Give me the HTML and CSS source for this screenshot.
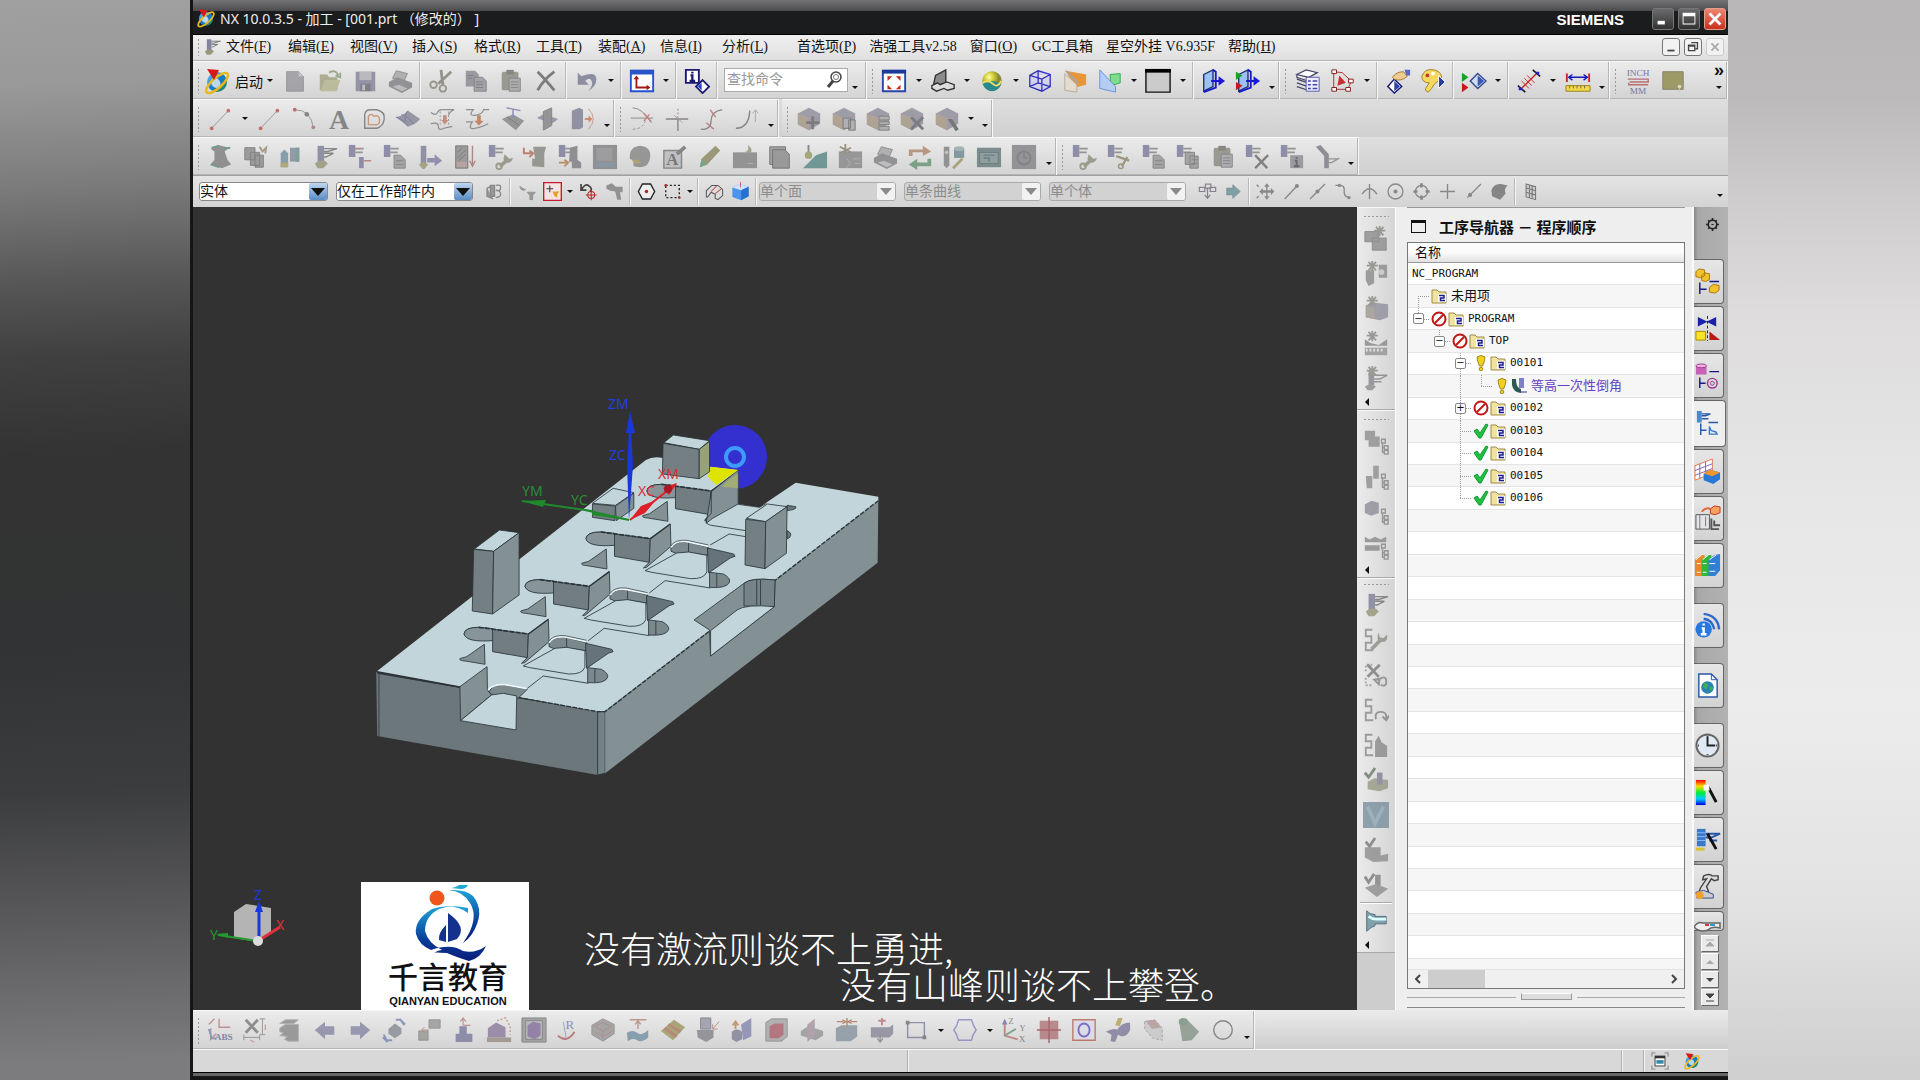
FILE: index.html
```html
<!DOCTYPE html>
<html lang="zh-CN">
<head>
  <meta charset="UTF-8">
  <meta name="viewport" content="width=device-width, initial-scale=1.0">
  <title>NX 10.0.3.5 - 加工</title>
  <link rel="stylesheet" href="styles.css">
</head>
<body>
  <!-- Shared gradients -->
  <svg class="defs" aria-hidden="true">
    <defs>
      <linearGradient id="globe" x1="0" y1="0" x2="1" y2="1"><stop offset="0" stop-color="#6cf"/><stop offset=".5" stop-color="#1878d0"/><stop offset="1" stop-color="#1a8f3a"/></linearGradient>
      <linearGradient id="rainbow" x1="0" y1="0" x2="0" y2="1"><stop offset="0" stop-color="#f00"/><stop offset=".25" stop-color="#fd0"/><stop offset=".5" stop-color="#0e3"/><stop offset=".75" stop-color="#0cf"/><stop offset="1" stop-color="#00d"/></linearGradient>
      <linearGradient id="qblue" x1="0" y1="0" x2="0" y2="1"><stop offset="0" stop-color="#1ea5d8"/><stop offset=".6" stop-color="#0a3f9a"/><stop offset="1" stop-color="#0a1a78"/></linearGradient>
      <radialGradient id="ballg" cx=".35" cy=".3"><stop offset="0" stop-color="#ffa"/><stop offset=".5" stop-color="#cc3"/><stop offset="1" stop-color="#883"/></radialGradient>
    </defs>
  </svg>

  <!-- Icon sprite -->
  <svg class="sprite" aria-hidden="true">
    <symbol id="nx" viewBox="0 0 28 28"><circle cx="14" cy="15" r="10" fill="url(#globe)"/><path d="M8 13q4-5 8 0t-2 8q-6 0-6-8z" fill="#fff" opacity=".7"/><ellipse cx="14" cy="16" rx="14" ry="5" transform="rotate(-42 14 16)" fill="none" stroke="#e8b820" stroke-width="2.5"/><path d="M4 2l12 1-5 10z" fill="#d81818"/></symbol>
    <symbol id="new" viewBox="0 0 28 28"><path d="M5 4h13l5 5v16H5z" fill="#9b9ba0" stroke="#88888e"/><path d="M18 4v5h5z" fill="#c4c4c8"/></symbol>
    <symbol id="open" viewBox="0 0 28 28"><path d="M3 7h8l2 3h9v14H3z" fill="#a3a384"/><path d="M4 25l4-12h17l-4 12z" fill="#b5b592"/><path d="M13 5q7-4 10 3M20 8l5 2 0-5" fill="none" stroke="#8ba07c" stroke-width="2"/></symbol>
    <symbol id="save" viewBox="0 0 28 28"><path d="M4 4h21v21H4z" fill="#87879c"/><path d="M8 4h13v9H8z" fill="#b3b3b8"/><path d="M9 17h11v8H9z" fill="#6f6f7c"/><path d="M11 18h3v6h-3z" fill="#bbb"/></symbol>
    <symbol id="print" viewBox="0 0 28 28"><path d="M10 3l12 3-4 9-12-4z" fill="#a8a8aa" stroke="#808080"/><path d="M2 15l9-5 16 6v5l-11 6-14-7z" fill="#85858a"/><path d="M6 20l10 5 6-3-9-4z" fill="#b7b7b9"/></symbol>
    <symbol id="cut" viewBox="0 0 28 28"><path d="M25 4L11 17M14 2l2 16" stroke="#85857c" stroke-width="3"/><circle cx="6" cy="18" r="3.500" fill="none" stroke="#8b8b7c" stroke-width="2"/><circle cx="16" cy="22" r="3.500" fill="none" stroke="#8b8b7c" stroke-width="2"/></symbol>
    <symbol id="copy" viewBox="0 0 28 28"><path d="M3 3h10l4 4v13H3z" fill="#8d8d93"/><path d="M12 10h9l4 4v11H12z" fill="#9a9aa2" stroke="#74747c"/><path d="M14 15h8M14 18h8M14 21h8M5 8h6M5 11h5" stroke="#6c6c74"/></symbol>
    <symbol id="paste" viewBox="0 0 28 28"><rect x="4" y="4" width="18" height="20" rx="2" fill="#8e8d84"/><path d="M9 2h8v5H9z" fill="#77776f"/><path d="M12 11h12v14H12z" fill="#a5a5a8" stroke="#77777c"/><path d="M14 15h8M14 18h8M14 21h8" stroke="#77777c"/></symbol>
    <symbol id="del" viewBox="0 0 28 28"><path d="M5 4q8 8 18 20M23 4Q12 12 5 24" fill="none" stroke="#6b6b6e" stroke-width="3"/></symbol>
    <symbol id="undo" viewBox="0 0 28 28"><path d="M4 5v13h12l-4-4q5-5 7 0t-4 11q10-6 9-14T8 9z" fill="#7f7f97"/></symbol>
    <symbol id="wcs" viewBox="0 0 28 28"><path d="M2 3h24v22H2z" fill="#fff" stroke="#2452d0" stroke-width="2"/><path d="M1 2h26v5H1z" fill="#2a55c8"/><path d="M8 10v11h13" fill="none" stroke="#a01818" stroke-width="2"/><path d="M5 12l3-4 3 4zM19 18l4 3-4 3z" fill="#a01818"/></symbol>
    <symbol id="info" viewBox="0 0 28 28"><path d="M2 2h14v14H2z" fill="#fff" stroke="#191970" stroke-width="2"/><path d="M9 4v2M7 8h2v5M6 14h6" stroke="#191970" stroke-width="2.500" fill="none"/><path d="M20 13l7 7-7 7-7-7z" fill="#fff" stroke="#191970" stroke-width="2"/><path d="M19 16v8l-4-4z" fill="#2238c8"/></symbol>
    <symbol id="fit" viewBox="0 0 28 28"><path d="M2 3h24v22H2z" fill="#fff" stroke="#2844a8" stroke-width="2"/><path d="M1 2h26v4H1z" fill="#1c3898"/><path d="M7 9h5l-5 5zM21 9h-5l5 5zM7 23h5l-5-5zM21 23h-5l5-5z" fill="#c82818"/></symbol>
    <symbol id="clip" viewBox="0 0 28 28"><path d="M4 17L6 8l11-6v14l-6 2z" fill="#8b8b8b" stroke="#333" stroke-width="1.500"/><path d="M2 19l6-3 3 2 7-3 8 3v4l-7 2-4-2-8 3-5-3z" fill="#ddd" stroke="#333" stroke-width="1.500"/></symbol>
    <symbol id="ball" viewBox="0 0 28 28"><circle cx="14" cy="14" r="10.500" fill="url(#ballg)"/><path d="M4 17q10-6 20 0-3 8-10 8T4 17z" fill="#2a8a8a"/><path d="M4 16q6-4 11 1t9-3" fill="none" stroke="#ed6" stroke-width="2"/></symbol>
    <symbol id="cube" viewBox="0 0 28 28"><path d="M3 8l9-5 13 4v13l-9 5-13-5zM3 8l13 4 9-5M16 12v13M12 3v13l-9 4M12 16l13 4" fill="#c8c8f4" fill-opacity=".5" stroke="#3030c0" stroke-width="1.400"/></symbol>
    <symbol id="persp" viewBox="0 0 28 28"><path d="M4 3l22 4v11l-12 3z" fill="#e8963a"/><path d="M3 6l13 12v8L3 24z" fill="#e4dccf" stroke="#b9aa95"/><path d="M3 3l14 15v-4L6 3z" fill="#b0a498"/></symbol>
    <symbol id="persp2" viewBox="0 0 28 28"><path d="M14 7l11-1v10l-10 3z" fill="#7fdc8c" stroke="#2fae4c"/><path d="M3 2l17 18v6L3 22z" fill="#b3cdf5" stroke="#6a90d8"/></symbol>
    <symbol id="bg" viewBox="0 0 28 28"><path d="M1 2h26v24H1z" fill="#cbcbcb" stroke="#111" stroke-width="1.500"/><path d="M0 1h28v4H0z"/></symbol>
    <symbol id="book" viewBox="0 0 28 28"><path d="M4 7l10-5v18L4 25z" fill="#9cc1f4" stroke="#223070" stroke-width="1.500"/><path d="M14 2l3 2v17l-13 5M12 14h10" fill="none" stroke="#1818c8" stroke-width="2"/><path d="M20 9l7 5-7 5z" fill="#1818e0"/></symbol>
    <symbol id="book2" viewBox="0 0 28 28"><use href="#book"/><path d="M1 4l7 4-7 5z" fill="#18a028"/><path d="M1 15l7 4-7 5z" fill="#c81818"/></symbol>
    <symbol id="layers" viewBox="0 0 28 28"><path d="M2 7l10-5 12 3-9 5zM2 7v3l12 4M2 12l12 4M2 16l12 4M2 20l12 4" fill="#fff" stroke="#446" stroke-width="1.300"/><path d="M12 10h14v15H12z" fill="#eef" stroke="#55a"/><path d="M14 14h3M19 14h5M14 18h3M19 18h5M14 22h3M19 22h5" stroke="#44a" stroke-width="1.500"/></symbol>
    <symbol id="nodes" viewBox="0 0 28 28"><path d="M4 4v19h15l4-9L13 5z" fill="none" stroke="#b02828"/><path d="M2 2h5v4H2zM2 21h5v4H2zM17 21h5v4h-5zM20 12h5v4h-5z" fill="#fff" stroke="#801818"/><path d="M10 8l7 8-9 3z" fill="#c83030"/></symbol>
    <symbol id="hand" viewBox="0 0 28 28"><path d="M10 12l-7 8 7 7 8-7z" fill="#fff" stroke="#181870" stroke-width="1.500"/><path d="M10 14v11l6-5z" fill="#2a40a8"/><path d="M8 10q4-6 12-6l4 5q-7 6-14 3z" fill="#f0cb90" stroke="#a07830"/><path d="M21 2h6v6h-4z" fill="#5a68c0"/></symbol>
    <symbol id="palette" viewBox="0 0 28 28"><path d="M2 9Q5 0 15 2t8 12q-6 0-8 4t-6 8q-4-1-3-4l4-6q-8 0-8-7z" fill="#f4d860" stroke="#a08020"/><circle cx="8" cy="8" r="2" fill="#c33"/><circle cx="14" cy="6" r="2" fill="#fff"/><path d="M20 8l7 7-7 7z" fill="#2a3c9a" stroke="#fff"/></symbol>
    <symbol id="play" viewBox="0 0 28 28"><path d="M1 5l7 5-7 5z" fill="#18a028"/><path d="M1 16l7 5-7 5z" fill="#c81818"/><path d="M18 6l9 8-9 8-8-8z" fill="#cde" stroke="#334a90" stroke-width="1.500"/><path d="M18 8v12l7-6z" fill="#3a58b8"/></symbol>
    <symbol id="dist" viewBox="0 0 28 28"><path d="M5 23L23 5" stroke="#c22" stroke-width="1.500"/><path d="M6 14l8 8M9 11l8 8M12 8l8 8" stroke="#c22"/><path d="M18 2l8 7M2 19l8 7" stroke="#111" stroke-width="1.500"/><path d="M20 4h5v5zM3 24v-5l5 5z" fill="#22c"/></symbol>
    <symbol id="ruler" viewBox="0 0 28 28"><path d="M2 6v9M26 6v9" stroke="#c22" stroke-width="2"/><path d="M4 10h20M8 7l-4 3 4 3M20 7l4 3-4 3" stroke="#1818b8" stroke-width="1.500" fill="none"/><path d="M1 19h26v6H1z" fill="#f2d94c" stroke="#987c14"/><path d="M5 19v3M9 19v3M13 19v3M17 19v3M21 19v3" stroke="#765"/></symbol>
    <symbol id="inch" viewBox="0 0 28 28"><text x="14" y="9" text-anchor="middle" font-size="10" fill="#7676a4">INCH</text><path d="M3 12h22v3H5M25 18H4v-2" fill="none" stroke="#b97070" stroke-width="1.500"/><text x="14" y="28" text-anchor="middle" font-size="10" fill="#7676a4">MM</text></symbol>
    <symbol id="olive" viewBox="0 0 28 28"><path d="M3 4h22v19H3z" fill="#9d9a68" stroke="#85836a"/><circle cx="21" cy="20" r="2" fill="#d8d8c0"/><path d="M21 22v5" stroke="#ccc"/></symbol>

    <!-- curves -->
    <symbol id="line" viewBox="0 0 28 28"><path d="M5 24L23 5" stroke="#888"/><circle cx="5" cy="24" r="2" fill="#c05a4a"/><circle cx="23" cy="5" r="2" fill="#c05a5a"/></symbol>
    <symbol id="arc" viewBox="0 0 28 28"><path d="M4 4q18 0 20 20" fill="none" stroke="#888"/><circle cx="4" cy="4" r="2" fill="#b55"/><circle cx="17" cy="9" r="2.500" fill="#777"/><circle cx="24" cy="23" r="2" fill="#a77"/></symbol>
    <symbol id="texta" viewBox="0 0 28 28"><text x="14" y="25" text-anchor="middle" font-family="Liberation Serif" font-weight="bold" font-size="30" fill="#77777b">A</text></symbol>
    <symbol id="offset" viewBox="0 0 28 28"><path d="M4 24V9q1-5 6-5h7q9 2 8 10t-8 10z" fill="none" stroke="#777" stroke-width="1.500"/><path d="M8 20v-9q3-4 6 0 6-2 6 4t-5 5z" fill="none" stroke="#c58a6a" stroke-width="1.500"/></symbol>
    <symbol id="sheet" viewBox="0 0 28 28"><path d="M1 12q8-2 13-7l13 9q-6 7-13 8z" fill="#8b8b97"/><path d="M1 12q7 1 13 10M7 9q8 3 13 10M14 5q-5 5-2 12" fill="none" stroke="#6a6a9e"/></symbol>
    <symbol id="curve1" viewBox="0 0 28 28"><path d="M1 7q5 4 7 0t6-3h12q-5 2-6 6M1 19q8-2 8 3t6 2l9-2" fill="none" stroke="#808080" stroke-width="1.300"/><path d="M11 6v14M20 6v14" stroke="#888" stroke-dasharray="2 2"/><path d="M14 10h4v5h2l-4 5-4-5h2z" fill="#c08070"/></symbol>
    <symbol id="curve2" viewBox="0 0 28 28"><path d="M1 4h8q-6 7 2 6t9-6h6M1 17h7q-6 9 3 7t14-5" fill="none" stroke="#808080" stroke-width="1.300"/><path d="M13 10h4v6h3l-5 5-5-5h3z" fill="#c07850"/></symbol>
    <symbol id="project" viewBox="0 0 28 28"><path d="M2 14l12-5 12 7-9 10z" fill="#8a8a8e"/><path d="M7 2l15 3M14 4v9" stroke="#7c7cae" stroke-width="1.500"/><path d="M8 12l13 9" stroke="#666"/></symbol>
    <symbol id="intersect" viewBox="0 0 28 28"><path d="M2 13l7-4 16 5-7 5z" fill="#8d8da5"/><path d="M9 6l9-4v19l-9 5z" fill="#88888c" stroke="#777"/></symbol>
    <symbol id="roll" viewBox="0 0 28 28"><path d="M2 5l8-3 4 2v19l-4 2H2z" fill="#84849a"/><path d="M16 14h6" stroke="#b77" stroke-width="2"/><path d="M20 10l4 4-4 4z" fill="#c8824a"/><path d="M20 3q10 11 0 22" fill="none" stroke="#c58a7a"/></symbol>
    <symbol id="trim" viewBox="0 0 28 28"><path d="M2 13h24M4 2q10 0 20 16" fill="none" stroke="#777"/><path d="M16 8l8 9M22 9l-6 7" stroke="#c07070" stroke-width="1.500"/><path d="M4 25q12 0 14-11" fill="none" stroke="#888" stroke-dasharray="3 2"/></symbol>
    <symbol id="cross" viewBox="0 0 28 28"><path d="M2 14h24M15 14v13" stroke="#777" stroke-width="1.500"/><path d="M15 3v11" stroke="#777" stroke-dasharray="2 2"/><path d="M11 10l9 8" stroke="#b88"/></symbol>
    <symbol id="scurve" viewBox="0 0 28 28"><path d="M2 25q11 1 11-9t12-12" fill="none" stroke="#777" stroke-width="1.400"/><path d="M12 4l6 8M8 18l8 7" stroke="#c07070" stroke-width="1.500"/></symbol>
    <symbol id="hook" viewBox="0 0 28 28"><path d="M2 24q14 0 15-19" fill="none" stroke="#777" stroke-width="1.500"/><path d="M23 5v12M20 8l3-4 3 4" stroke="#999" fill="none"/></symbol>
    <symbol id="box" viewBox="0 0 28 28"><path d="M2 8l12-6 12 6v11l-12 7-12-6z" fill="#92919c"/><path d="M2 8l12 5v13l-12-6z" fill="#a79a86"/><path d="M2 8l12 5 12-5M14 13v13" stroke="#a993a8" fill="none"/></symbol>
    <symbol id="b-move" viewBox="0 0 28 28"><use href="#box"/><path d="M18 11v14M11 18h14" stroke="#6c6c70" stroke-width="3"/></symbol>
    <symbol id="b-copy" viewBox="0 0 28 28"><use href="#box"/><path d="M13 13h8v11h-8zM19 15h7v11h-7z" fill="#a9a9ac" stroke="#666"/></symbol>
    <symbol id="b-list" viewBox="0 0 28 28"><use href="#box"/><path d="M15 11h11v4H15zM15 17h11v3H15zM15 22h11v4H15z" fill="#aaa" stroke="#707070"/></symbol>
    <symbol id="b-x" viewBox="0 0 28 28"><use href="#box"/><path d="M13 12l13 13M26 12L13 25" stroke="#6c6c70" stroke-width="3"/></symbol>
    <symbol id="b-wand" viewBox="0 0 28 28"><use href="#box"/><path d="M16 12l9 14" stroke="#666" stroke-width="4"/><path d="M12 13h9" stroke="#999" stroke-width="2"/></symbol>

    <!-- machining -->
    <symbol id="tool" viewBox="0 0 28 28"><path d="M6 2h7v18H6z" fill="#83839c"/><path d="M13 5h14l-10 3h-4M13 10h10l-8 4h-2" fill="none" stroke="#777" stroke-width="1.500"/><path d="M3 21l4-3h7l3 3-5 5H6z" fill="#9a987c"/></symbol>
    <symbol id="mini" viewBox="0 0 28 28"><path d="M2 1h7v13H2z" fill="#8080a0"/><path d="M9 5h9M9 9h8" stroke="#888" stroke-width="2"/></symbol>
    <symbol id="frame" viewBox="0 0 28 28"><path d="M4 5l8-4 12 3-5 4 3 9 4 5-10 4-12-4 4-5V8z" fill="#838385"/><path d="M5 4l8-2M19 5l6-1M4 22l9 3" stroke="#5f927a" stroke-width="2"/></symbol>
    <symbol id="docs" viewBox="0 0 28 28"><path d="M3 4h11v13H3zM9 9h10v14H9zM14 12h9v13h-9z" fill="#8f8f8f" stroke="#707070"/><path d="M19 3l3 5 4-4-1 6" stroke="#988f74" stroke-width="2" fill="none"/></symbol>
    <symbol id="bottle" viewBox="0 0 28 28"><path d="M4 10l4-4 4 4v15H4z" fill="#7993a4"/><path d="M4 20h8v5H4z" fill="#a7a06a"/><path d="M14 4h10v15H14z" fill="#868fa0"/><path d="M20 4h4v15h-4z" fill="#6d9490"/></symbol>
    <symbol id="tools2" viewBox="0 0 28 28"><use href="#mini"/><path d="M13 14h5v12h-5z" fill="#8080a0"/><path d="M8 5h7M18 18h8" stroke="#b77" stroke-width="1.500"/></symbol>
    <symbol id="tool-doc" viewBox="0 0 28 28"><use href="#mini"/><path d="M13 12h7l5 5v9H13z" fill="#9a9a9c" stroke="#777"/><path d="M15 18h8M15 22h8" stroke="#777"/></symbol>
    <symbol id="tool-docs" viewBox="0 0 28 28"><use href="#mini"/><path d="M11 9h10v13H11zM16 13h9v13h-9z" fill="#9a9a9c" stroke="#747474"/><path d="M18 17h6M18 21h6" stroke="#777"/></symbol>
    <symbol id="tool-arrow" viewBox="0 0 28 28"><path d="M4 2h6v22H4z" fill="#83839c"/><path d="M2 22l5-3 5 3-4 5H6z" fill="#9d9a72"/><path d="M11 15h8v-4l8 7-8 6v-4h-8z" fill="#8484a8"/></symbol>
    <symbol id="wall" viewBox="0 0 28 28"><path d="M4 2h13v24H4z" fill="#8f8f8f" stroke="#666"/><path d="M6 15l9-9M6 9l5-5M7 18l8-7" stroke="#666"/><path d="M5 19h11v6H5z" fill="#b39a98"/><path d="M22 2v20M19 18l3 6 3-6" stroke="#a77" fill="none" stroke-width="1.500"/></symbol>
    <symbol id="tool-wrench" viewBox="0 0 28 28"><use href="#mini"/><path d="M14 24l7-6" stroke="#93917f" stroke-width="4"/><path d="M19 11q-3 8 2 9t7-5l-4 1-2-2z" fill="#93917f"/><circle cx="13" cy="24" r="3" fill="none" stroke="#93917f" stroke-width="2"/></symbol>
    <symbol id="tool-cut" viewBox="0 0 28 28"><use href="#mini"/><path d="M11 13l14 5M17 24l6-10" stroke="#918d70" stroke-width="2.500" fill="none"/><circle cx="16" cy="24" r="2.500" fill="none" stroke="#918d70" stroke-width="1.500"/></symbol>
    <symbol id="tool-x" viewBox="0 0 28 28"><use href="#mini"/><path d="M12 12l13 14M26 12L12 26" stroke="#707074" stroke-width="2.500"/></symbol>
    <symbol id="tool-info" viewBox="0 0 28 28"><use href="#mini"/><path d="M12 12h14v14H12z" fill="#909098"/><path d="M19 14v2M17 18h2v6M16 24h6" stroke="#555" stroke-width="2" fill="none"/></symbol>
    <symbol id="tool-seg" viewBox="0 0 28 28"><path d="M2 3l5-2 9 10v15h-5V13z" fill="#808088"/><path d="M16 16h10l-7 4h-3" fill="none" stroke="#888" stroke-width="1.500"/></symbol>
    <symbol id="post" viewBox="0 0 28 28"><path d="M12 3h14l-2 7v15l-13-1v-8h3z" fill="#8b8b84"/><path d="M2 4v6h8M8 7l4 3-4 4" fill="none" stroke="#b5705a" stroke-width="2"/></symbol>
    <symbol id="machine" viewBox="0 0 28 28"><use href="#mini"/><path d="M14 4l8-2v15l4 3v6H16v-7h-3z" fill="#808086"/><path d="M2 20h8M8 17l4 3-4 4" fill="none" stroke="#b5804a" stroke-width="2"/></symbol>
    <symbol id="panel" viewBox="0 0 28 28"><path d="M1 1h26v26H1z" fill="#848486"/><path d="M5 4h17v14H5z" fill="#929294"/><path d="M4 20h20v5H4z" fill="#7c8c9c"/></symbol>
    <symbol id="head" viewBox="0 0 28 28"><path d="M14 2q12 1 11 12t-11 11l-7-1v-6l-4-2Q2 3 14 2z" fill="#8a8a88"/><path d="M5 17h8l2 4H8z" fill="#a89a6a"/></symbol>
    <symbol id="apad" viewBox="0 0 28 28"><path d="M2 7h19v19H2z" fill="#bcbcbe" stroke="#777" stroke-width="1.500"/><text x="11" y="23" text-anchor="middle" font-family="Liberation Serif" font-weight="bold" font-size="18" fill="#666">A</text><path d="M16 11l9-8" stroke="#77777a" stroke-width="4"/></symbol>
    <symbol id="pencil" viewBox="0 0 28 28"><path d="M3 25l2-9L20 2l5 5L11 22z" fill="#8d8d68"/><path d="M3 25l2-9 6 6z" fill="#6a9a80"/></symbol>
    <symbol id="folder" viewBox="0 0 28 28"><path d="M1 9h26v17H1z" fill="#878787"/><path d="M14 9q5-2 3-8 6 4 3 9z" fill="#999580"/><path d="M17 21h6" stroke="#aaa"/></symbol>
    <symbol id="pages" viewBox="0 0 28 28"><path d="M3 3h17v19H3z" fill="#999" stroke="#606060"/><path d="M6 6h13l5 5v15H6z" fill="#8e8e8e" stroke="#606060"/></symbol>
    <symbol id="ramp" viewBox="0 0 28 28"><path d="M1 26L15 12l12-4v18z" fill="#5f8c8a"/><path d="M7 1v9" stroke="#777" stroke-width="2"/><circle cx="7" cy="12" r="4" fill="#9c9c6a"/></symbol>
    <symbol id="shop" viewBox="0 0 28 28"><path d="M2 8h25v18H2z" fill="#8b8b8b"/><path d="M9 0v12M3 3l12 6M3 10l12-6" stroke="#888474" stroke-width="2"/><path d="M11 16l3 5-4 5M17 16h8M19 21h6" stroke="#b0a59f" fill="none"/></symbol>
    <symbol id="loop" viewBox="0 0 28 28"><path d="M2 6h15V2l9 6-9 5v-4H6v4H2z" fill="#b08a72"/><path d="M26 16v8H11v4l-9-6 9-6v4h11v-4z" fill="#6c9878"/></symbol>
    <symbol id="mix" viewBox="0 0 28 28"><path d="M3 3h6v20l-3 3-3-3z" fill="#868688"/><circle cx="6" cy="9" r="2" fill="#bbb"/><path d="M14 5h11v10H14z" fill="#708e94"/><ellipse cx="19.500" cy="5" rx="5.500" ry="2.500" fill="#9aa"/><path d="M13 26l10-10" stroke="#a09a6a" stroke-width="3"/></symbol>
    <symbol id="screen" viewBox="0 0 28 28"><path d="M1 4h26v21H1z" fill="#6c7f80"/><path d="M4 9h20v12H4z" fill="#829494" stroke="#586a6c"/><path d="M8 12h12M8 15h6v4" stroke="#5c6c70" stroke-width="1.500" fill="none"/></symbol>
    <symbol id="timer" viewBox="0 0 28 28"><path d="M1 1h26v26H1z" fill="#87878b"/><circle cx="14" cy="15" r="7" fill="none" stroke="#737378" stroke-width="2"/><path d="M14 9v6h4" fill="none" stroke="#6a6a70"/></symbol>
    <symbol id="spark" viewBox="0 0 28 28"><path d="M18 0v11M12 5h12M14 1l8 9M22 1l-8 9" stroke="#8d8d88" stroke-width="2"/></symbol>
    <symbol id="v-docs" viewBox="0 0 28 28"><path d="M2 6h15v11H2zM10 13h15v13H10z" fill="#929292" stroke="#808080"/><use href="#spark"/></symbol>
    <symbol id="v-tool" viewBox="0 0 28 28"><path d="M3 10h9v14l-6 3-3-6zM17 4h9v14h-9z" fill="#909090"/><circle cx="20" cy="12" r="3" fill="#c8c8c8"/><use href="#spark" x="-8"/></symbol>
    <symbol id="v-box" viewBox="0 0 28 28"><path d="M3 10l8-3 16 2v14l-9 3-15-3z" fill="#9494a0"/><path d="M3 10l9 3v12l-9-2z" fill="#a49c94"/><use href="#spark" x="-8"/></symbol>
    <symbol id="v-rule" viewBox="0 0 28 28"><path d="M2 9l6 4 9 2 9-6v7H2z" fill="#8e8e8e"/><path d="M2 18h24v8H2z" fill="#979797"/><path d="M4 19v3M8 19v3M12 19v3M16 19v3M20 19v3" stroke="#ddd" stroke-width="2"/><use href="#spark" x="-8"/></symbol>
    <symbol id="v-mill" viewBox="0 0 28 28"><path d="M6 5h6v16H6z" fill="#8b8b90"/><path d="M12 10h14l-8 4h-6M12 17h8" fill="none" stroke="#888" stroke-width="1.500"/><path d="M2 22l6-3 6 3-4 4H5z" fill="#929292"/><use href="#spark" x="-8"/></symbol>
    <symbol id="hier" viewBox="0 0 28 28"><path d="M20 11h4v4h-4zM23 18h4v4h-4zM23 23h4v4h-4zM21 15v10h2M21 20h2" fill="none" stroke="#8a8a8a" stroke-width="1.500"/></symbol>
    <symbol id="h-docs" viewBox="0 0 28 28"><path d="M2 2h11v10H2zM6 8h12v11H6z" fill="#939393"/><use href="#hier"/></symbol>
    <symbol id="h-tool" viewBox="0 0 28 28"><path d="M3 13h7v13H4zM11 2h6v14h-6z" fill="#939393"/><use href="#hier"/></symbol>
    <symbol id="h-box" viewBox="0 0 28 28"><path d="M2 6l7-4 8 2v11l-8 3-7-3z" fill="#92929c"/><use href="#hier"/></symbol>
    <symbol id="h-rule" viewBox="0 0 28 28"><path d="M2 3l5 3 6-3 6 3 6-3v6H2zM2 12h16v6H2z" fill="#8e8e8e"/><use href="#hier"/></symbol>
    <symbol id="path" viewBox="0 0 28 28"><path d="M10 3H3v7h6v7H3v8h8" fill="none" stroke="#909090" stroke-width="2"/></symbol>
    <symbol id="p-wrench" viewBox="0 0 28 28"><use href="#path"/><path d="M9 24l10-10" stroke="#92928a" stroke-width="4"/><path d="M17 6q-4 9 3 10t6-8l-4 4-4-1z" fill="#92928a"/></symbol>
    <symbol id="p-x" viewBox="0 0 28 28"><path d="M10 3H3v7M3 17v8h8" fill="none" stroke="#999" stroke-dasharray="2 2" stroke-width="2"/><path d="M5 3l12 13M18 3L5 16" stroke="#808080" stroke-width="3"/><path d="M16 20q8-7 9 0t-6 5M12 19l6-1-1 6z" fill="none" stroke="#8a8a8a" stroke-width="2"/></symbol>
    <symbol id="p-redo" viewBox="0 0 28 28"><use href="#path"/><path d="M14 24q-2-8 5-8t6 7M21 21l4 4 3-5" fill="none" stroke="#888" stroke-width="2"/></symbol>
    <symbol id="p-doc" viewBox="0 0 28 28"><use href="#path"/><path d="M13 10l4-6 3 7 6 4v12H13z" fill="#8e8e8e"/></symbol>
    <symbol id="c-box" viewBox="0 0 28 28"><path d="M5 16l7-4 15 2v9l-9 3-13-2z" fill="#9c9c88"/><path d="M15 6h6v13h-6z" fill="#85859a"/><path d="M2 6l4 5 7-10" fill="none" stroke="#6f806f" stroke-width="3"/></symbol>
    <symbol id="vpad" viewBox="0 0 28 28"><path d="M0 0h28v28H0z" fill="#8094a3"/><path d="M5 5l8 18L22 5" fill="none" stroke="#93a8b3" stroke-width="4"/></symbol>
    <symbol id="c-mach" viewBox="0 0 28 28"><path d="M2 11h17v9l8-2v8l-16 1-9-5z" fill="#929292"/><path d="M3 5l4 5 6-9" fill="none" stroke="#808080" stroke-width="3"/></symbol>
    <symbol id="c-base" viewBox="0 0 28 28"><path d="M13 3h6v13h-6z" fill="#888"/><path d="M2 17l12-4 13 5-12 9z" fill="#939393"/><path d="M2 5l4 6 6-9" fill="none" stroke="#808080" stroke-width="3"/></symbol>
    <symbol id="shank" viewBox="0 0 28 28"><path d="M4 2q3 4 9 4v2h12v8H13v2q-4 1-9 6z" fill="#7fa0ac" stroke="#4e6c7c"/><path d="M6 8q4 3 8 3h11" fill="none" stroke="#dff" stroke-width="3"/></symbol>

    <!-- selection bar -->
    <symbol id="link" viewBox="0 0 28 28"><path d="M3 9v12l9 4M3 9l5-2M8 5h6v16H8z" fill="#999" stroke="#888" stroke-width="2"/><path d="M16 5q8-2 7 4t-7 3q6 0 7 5t-7 6" fill="none" stroke="#888" stroke-width="2"/></symbol>
    <symbol id="filter" viewBox="0 0 28 28"><path d="M4 6q2 9 9 5M15 15h12l-4 5v6h-4v-6z" fill="#999" stroke="#888"/></symbol>
    <symbol id="snapr" viewBox="0 0 28 28"><path d="M1 1h26v26H1z" fill="#f2e4e4" stroke="#c81830" stroke-width="2"/><path d="M10 5v10M5 10h10" stroke="#333" stroke-width="1.500"/><path d="M14 14h10l-3 4v5l-4-2z" fill="#e8a020"/></symbol>
    <symbol id="undo2" viewBox="0 0 28 28"><path d="M3 3v9h8M4 11Q9 1 15 6t1 8" fill="none" stroke="#444" stroke-width="2.500"/><circle cx="18" cy="19" r="5" fill="none" stroke="#b22" stroke-width="1.500"/><path d="M18 11v16M10 19h16" stroke="#b22" stroke-width="1.500"/></symbol>
    <symbol id="elbow" viewBox="0 0 28 28"><path d="M2 5l8-3 6 5h10v8h-4l2 11h-6l-3-12-7-1-6-3z" fill="#919191"/></symbol>
    <symbol id="hexd" viewBox="0 0 28 28"><path d="M8 3h12l6 11-6 11H8L2 14z" fill="#eee" stroke="#222" stroke-width="2"/><circle cx="14" cy="14" r="2.500" fill="#a22"/></symbol>
    <symbol id="marq" viewBox="0 0 28 28"><path d="M4 5h20v18H4z" fill="none" stroke="#222" stroke-width="2" stroke-dasharray="3 3"/><circle cx="4" cy="5" r="2" fill="#a33"/><circle cx="24" cy="23" r="2" fill="#a33"/></symbol>
    <symbol id="shell" viewBox="0 0 28 28"><path d="M2 22v-9l8-8h9l7 6v9l-7 6-4-2v-6l-6-3-5 7z" fill="#ddd" stroke="#555" stroke-width="1.500"/><path d="M9 14l8-8M15 17l9-7" fill="none" stroke="#b55" stroke-width="1.500"/></symbol>
    <symbol id="solid" viewBox="0 0 28 28"><path d="M2 8l10-5 14 4v14l-11 6-13-5z" fill="#4c95ee"/><path d="M2 8l10-5 14 4-11 5z" fill="#cfe3fb"/><path d="M15 12l11-5v14l-11 6z" fill="#2870cf"/><path d="M14 0v8" stroke="#b33"/></symbol>
    <symbol id="seltree" viewBox="0 0 28 28"><path d="M2 8h8v6H2zM11 3h8v6h-8zM18 8h8v6h-8zM14 10v13M10 19l4 5 4-5" fill="none" stroke="#88808f" stroke-width="1.800"/></symbol>
    <symbol id="arrowt" viewBox="0 0 28 28"><path d="M4 9h9V4l11 10-11 10v-5H4z" fill="#7ca0a4" stroke="#7a8890"/></symbol>
    <symbol id="s-move" viewBox="0 0 28 28"><path d="M16 2l4 5h-3v5h5V9l5 5-5 5v-3h-5v5h3l-4 5-4-5h3v-5h-5v3l-5-5 5-5v3h5V7h-3z" fill="#888"/><path d="M1 4l3 3M1 24l3-3" stroke="#888" stroke-width="2"/></symbol>
    <symbol id="s-end" viewBox="0 0 28 28"><path d="M4 25L22 6" stroke="#888" stroke-width="2"/><circle cx="22" cy="6" r="3" fill="#888"/></symbol>
    <symbol id="s-mid" viewBox="0 0 28 28"><path d="M3 25L25 3" stroke="#888" stroke-width="2"/><circle cx="14" cy="14" r="3" fill="#888"/></symbol>
    <symbol id="s-curve" viewBox="0 0 28 28"><path d="M2 5h7q7 0 6 8t7 10" fill="none" stroke="#888" stroke-width="2"/><circle cx="8" cy="5" r="2.500" fill="#888"/><circle cx="22" cy="23" r="2.500" fill="#888"/></symbol>
    <symbol id="s-int" viewBox="0 0 28 28"><path d="M3 18q11-16 22 0M14 3v22" fill="none" stroke="#888" stroke-width="2"/></symbol>
    <symbol id="s-cen" viewBox="0 0 28 28"><circle cx="14" cy="14" r="11" fill="none" stroke="#888" stroke-width="2"/><circle cx="14" cy="14" r="3" fill="#888"/></symbol>
    <symbol id="s-quad" viewBox="0 0 28 28"><circle cx="14" cy="14" r="9" fill="none" stroke="#888" stroke-width="2"/><path d="M14 2v6M14 20v6M2 14h6M20 14h6" stroke="#888" stroke-width="4"/></symbol>
    <symbol id="s-plus" viewBox="0 0 28 28"><path d="M14 3v22M3 14h22" stroke="#888" stroke-width="2"/></symbol>
    <symbol id="s-on" viewBox="0 0 28 28"><path d="M5 23L25 3" stroke="#888" stroke-width="2"/><circle cx="9" cy="19" r="3" fill="#888"/></symbol>
    <symbol id="s-face" viewBox="0 0 28 28"><path d="M2 12Q6 2 16 3l10 2q-6 5-3 12l-8 9-12-5z" fill="#858585"/></symbol>
    <symbol id="s-grid" viewBox="0 0 28 28"><path d="M6 3l14 4v19L6 22zM6 9l14 4M6 15l14 4M11 5v19M15 6v19" fill="#ccc" stroke="#777" stroke-width="1.500"/></symbol>

    <!-- bottom bar -->
    <symbol id="abs" viewBox="0 0 28 28"><path d="M13 2v9h12M4 12v12l6-6M2 8l6-6" fill="none" stroke="#b98484" stroke-width="1.500"/><path d="M2 13l3 10h5" fill="none" stroke="#7d8fb5" stroke-width="2"/><text x="18" y="25" text-anchor="middle" font-size="10" font-weight="bold" fill="#77779a">ABS</text></symbol>
    <symbol id="xdim" viewBox="0 0 28 28"><path d="M4 3l13 14M17 3L4 17" stroke="#808083" stroke-width="3"/><path d="M22 2v17M19 2h6M19 19h6M2 22h17M2 19v6M19 19v6" stroke="#888"/><path d="M25 8v6M9 25l4 2" stroke="#b77"/></symbol>
    <symbol id="stack" viewBox="0 0 28 28"><path d="M3 7l6-4h14l-5 4zM3 12l6-4h14v18H12l-4-2 3-3-8-1 4-3-4-1z" fill="#8e8e90" stroke="#a8a8a8"/></symbol>
    <symbol id="aleft" viewBox="0 0 28 28"><path d="M3 14l11-9v5h10v9H14v5z" fill="#8b8ba7"/></symbol>
    <symbol id="aright" viewBox="0 0 28 28"><path d="M25 14L14 5v5H4v9h10v5z" fill="#8b8ba7"/></symbol>
    <symbol id="swap" viewBox="0 0 28 28"><path d="M8 13l7-6 7 5v6l-7 5-7-5z" fill="#8b8f97"/><path d="M16 3h5l4 6M20 2l6 6M3 19l3 6h6M2 22l5 5" fill="none" stroke="#7c8ab5" stroke-width="2"/></symbol>
    <symbol id="boxes" viewBox="0 0 28 28"><path d="M14 3h12v9H14zM3 15h10v10H3z" fill="#9a9c98" stroke="#888"/><path d="M14 14H7M9 11l-3 3 3 3" stroke="#b77" fill="none"/></symbol>
    <symbol id="mount" viewBox="0 0 28 28"><path d="M9 10h8v8h6v9H5v-9h4z" fill="#8080a2"/><path d="M13 9V2M10 5l3-4 3 4M13 9h8" fill="none" stroke="#b88" stroke-width="1.300"/></symbol>
    <symbol id="house" viewBox="0 0 28 28"><path d="M2 12l9-6 10 5v11H2z" fill="#8e809f"/><path d="M1 22h26v5H1z" fill="#999088"/><path d="M12 4l9-3 5 9v9" fill="none" stroke="#b88" stroke-dasharray="2 2" stroke-width="1.500"/></symbol>
    <symbol id="cubef" viewBox="0 0 28 28"><path d="M1 1h26v26H1z" fill="#999" stroke="#777"/><path d="M5 4h18v20H5z" fill="#b5b5b7" stroke="#777"/><path d="M7 9l6-4 8 2v13l-6 4-8-3z" fill="#87739c"/></symbol>
    <symbol id="radius" viewBox="0 0 28 28"><path d="M3 20q10 9 18-4" fill="none" stroke="#b56a6a" stroke-width="2"/><text x="16" y="13" text-anchor="middle" font-size="14" fill="#8080b8">R</text><path d="M9 5l3 18" stroke="#89c"/></symbol>
    <symbol id="iso" viewBox="0 0 28 28"><path d="M2 9l12-7 12 6v10l-12 8-12-7z" fill="#9b9b9b" stroke="#888"/><path d="M5 10l9-4 9 4-9 5zM5 16l9 5 9-5M14 15v8" fill="none" stroke="#a77f7f"/></symbol>
    <symbol id="wave" viewBox="0 0 28 28"><path d="M2 17q6-4 11 0t12-3v8q-7 6-12 3T3 26z" fill="#7994a8"/><path d="M5 3h18M14 4v9M11 8l3-4 3 4" stroke="#b58a7a" fill="none" stroke-width="1.500"/></symbol>
    <symbol id="patch" viewBox="0 0 28 28"><path d="M1 15L15 3l12 8-13 14z" fill="#a19a68"/><path d="M5 12l13 9M9 8l13 8" stroke="#b07a6a" stroke-width="3"/></symbol>
    <symbol id="probe" viewBox="0 0 28 28"><path d="M6 1h11v12H6z" fill="#9a9aac" stroke="#777"/><path d="M2 14h18v8l-8 5-9-5z" fill="#88888f"/><path d="M26 5l-7 8M19 8v5h5" stroke="#b77" fill="none"/></symbol>
    <symbol id="bucket" viewBox="0 0 28 28"><path d="M3 16q5-5 11 0v8l-6 3-5-3z" fill="#85859a"/><path d="M13 8l11-7v20l-9 4z" fill="#8a8ab0"/><path d="M7 13V7M4 9l3-4 3 4" stroke="#c08a5a" stroke-width="2" fill="none"/></symbol>
    <symbol id="redc" viewBox="0 0 28 28"><path d="M2 6l6-4h17v19l-6 5H2z" fill="#aaa8a8" stroke="#888"/><path d="M6 10l5-3h10v12l-5 4H6z" fill="#ad6570"/></symbol>
    <symbol id="planes" viewBox="0 0 28 28"><path d="M2 15l8-5 16 5v5l-8 5-16-5z" fill="#989a9a"/><path d="M9 8l8-6v18l-8 7z" fill="#a898a2"/></symbol>
    <symbol id="merge" viewBox="0 0 28 28"><path d="M2 12l6-3h17v12l-7 5H2z" fill="#8b97a2"/><path d="M3 5h7M18 5h7M14 1v10M9 3l4 2-4 2M19 3l-4 2 4 2" stroke="#b07a60" fill="none" stroke-width="1.500"/></symbol>
    <symbol id="split" viewBox="0 0 28 28"><path d="M2 11h20l4-3v10l-4 4H2z" fill="#8b8b9c"/><path d="M14 1v8M10 4h8" stroke="#b77" stroke-width="2"/><path d="M12 18v9M9 23l3 4 3-4" stroke="#888" fill="none" stroke-width="1.500"/></symbol>
    <symbol id="rect" viewBox="0 0 28 28"><path d="M5 6h18v16H5z" fill="none" stroke="#8080a4" stroke-width="1.500"/><path d="M3 4h4v4H3zM21 20h4v4h-4z" fill="#777"/></symbol>
    <symbol id="hexg" viewBox="0 0 28 28"><path d="M7 3h14q2 7 5 11-4 5-5 11H7Q5 18 2 14q4-5 5-11z" fill="none" stroke="#8a8ac4" stroke-width="1.500"/></symbol>
    <symbol id="csys" viewBox="0 0 28 28"><path d="M4 4v16l14 4" fill="none" stroke="#b77" stroke-width="2"/><path d="M4 20l12-7" stroke="#6a9a78" stroke-width="2"/><path d="M1 8l3-6 3 6z" fill="#77a"/><text x="8" y="8" font-size="9" fill="#777">Z</text><text x="20" y="15" font-size="9" fill="#777">Y</text><text x="19" y="27" font-size="10" fill="#777">X</text></symbol>
    <symbol id="redg" viewBox="0 0 28 28"><path d="M4 4h20v20H4z" fill="#b07c80"/><path d="M14 0v28M1 14h26" stroke="#a05058" stroke-width="1.500"/></symbol>
    <symbol id="obox" viewBox="0 0 28 28"><path d="M2 3h24v22H2z" fill="#dcdce8" stroke="#b96a5a" stroke-width="1.500"/><ellipse cx="14" cy="14" rx="6" ry="7" fill="none" stroke="#6a5ac0" stroke-width="2"/></symbol>
    <symbol id="blade" viewBox="0 0 28 28"><path d="M13 14q5-8 14-8v8q-3 7-9 7l-4-2-3 8-5-1 1-7-6-3q8-5 13-2z" fill="#84809e"/><path d="M11 9l3-8 5 0-3 9z" fill="#b5a55c"/></symbol>
    <symbol id="dashb" viewBox="0 0 28 28"><path d="M5 5l11-2 8 9v13l-10-2L5 13z" fill="#c8c8c8" stroke="#999" stroke-dasharray="3 2"/><path d="M6 4l10-1 7 8-10 2z" fill="#b59a9a"/></symbol>
    <symbol id="cone" viewBox="0 0 28 28"><path d="M4 3l8-1 14 14-8 9-10 1z" fill="#8a988c"/><ellipse cx="9" cy="5" rx="5" ry="4" fill="#7b9482"/></symbol>
    <symbol id="circ" viewBox="0 0 28 28"><circle cx="14" cy="14" r="10" fill="none" stroke="#777" stroke-width="1.500"/></symbol>

    <!-- navigator -->
    <symbol id="stop" viewBox="0 0 16 16"><circle cx="8" cy="8" r="6.500" fill="#fff" stroke="#c01818" stroke-width="2"/><path d="M12 4l-8 8" stroke="#c01818" stroke-width="2"/></symbol>
    <symbol id="warn" viewBox="0 0 16 16"><path d="M4 2q4-3 8 0 0 4-2.500 9h-3Q4 6 4 2z" fill="#f0d020" stroke="#a08a10"/><circle cx="8" cy="14" r="1.800" fill="#f0d020" stroke="#a08a10"/></symbol>
    <symbol id="okay" viewBox="0 0 16 16"><path d="M1 8l3-2 3 4 6-9 2 1-7 13H6z" fill="#20c040" stroke="#129a30"/></symbol>
    <symbol id="prog" viewBox="0 0 16 16"><path d="M1 2h5l2 2h7v11H1z" fill="#f0e2a0" stroke="#a08c48"/><path d="M7 6h8v8H7z" fill="#fff"/><path d="M8 7.500h5v2.500H9.500v2.500H14" fill="none" stroke="#1c1c90" stroke-width="1.500"/></symbol>
    <symbol id="oper" viewBox="0 0 16 16"><path d="M1 1v6q1 7 9 8v-4Q5 10 5 1z" fill="#2a5a50"/><path d="M8 0h5v10H8z" fill="#8080c8"/><path d="M10 14h6" stroke="#338"/></symbol>

    <!-- resource tabs -->
    <symbol id="gear" viewBox="0 0 28 28"><circle cx="14" cy="14" r="8" fill="none" stroke="#222" stroke-width="3"/><path d="M14 2v4M14 22v4M2 14h4M22 14h4M6 6l3 3M19 19l3 3M22 6l-3 3M9 19l-3 3" stroke="#222" stroke-width="3"/><path d="M12 14h4" stroke="#222" stroke-width="2"/></symbol>
    <symbol id="t-asm" viewBox="0 0 28 28"><path d="M2 4l3-3 6 1v6l-4 2-5-1zM8 8l3-3 5 1v6l-4 2-4-1zM16 20l4-3 6 1v5l-4 3-6-1z" fill="#f2c22c" stroke="#a87808"/><path d="M6 15v12M6 22h7M16 14h10" stroke="#181888" stroke-width="1.500"/></symbol>
    <symbol id="t-con" viewBox="0 0 28 28"><path d="M4 2l10 5-10 5zM23 2L13 7l10 5z" fill="#1a20a8"/><path d="M14 1v26" stroke="#222" stroke-dasharray="3 2"/><path d="M2 17h10v9H2z" fill="#fae028" stroke="#a80"/><path d="M16 17l11 9H16z" fill="#b81818"/></symbol>
    <symbol id="t-part" viewBox="0 0 28 28"><path d="M2 4h11v9H2z" fill="#c860b8"/><ellipse cx="7.500" cy="4" rx="5.500" ry="2" fill="#f0b0e0" stroke="#a03890"/><path d="M16 10h10M6 16v11M6 22h6" stroke="#181888" stroke-width="1.500"/><circle cx="19" cy="22" r="5" fill="none" stroke="#a03890" stroke-width="1.500"/><circle cx="19" cy="22" r="2" fill="none" stroke="#a03890"/></symbol>
    <symbol id="t-op" viewBox="0 0 28 28"><path d="M3 1h5v12H3z" fill="#4a88d0"/><path d="M8 4h9l-5 2H8M8 9h7M15 13h10M7 14v12M7 21h6" fill="none" stroke="#2858a8" stroke-width="1.500"/><path d="M16 17v8h8q-1-3-4-3t-4-5z" fill="none" stroke="#3878c8" stroke-width="1.500"/></symbol>
    <symbol id="t-mach" viewBox="0 0 28 28"><path d="M1 8l18-7v15L1 23z" fill="#fff" stroke="#e07848"/><path d="M1 13l18-7M1 18l18-7M6 6v15M12 4v15" stroke="#8060c0"/><path d="M10 16l6-4 11 3v7l-7 5-10-4z" fill="#2878d8"/><path d="M10 16l6-4 11 3-8 4z" fill="#f0962c"/></symbol>
    <symbol id="t-cell" viewBox="0 0 28 28"><path d="M2 10h14v15H2z" fill="#e4e4e8" stroke="#555"/><path d="M6 10v15M12 12v10" stroke="#777"/><path d="M18 14v11h8M21 16v5h6" fill="none" stroke="#555" stroke-width="2"/><path d="M8 7q4-5 9-3" fill="none" stroke="#e06838" stroke-width="2"/><path d="M17 4l4-3 6 1v6l-5 2-5-1z" fill="#f8a060" stroke="#c03818"/></symbol>
    <symbol id="t-books" viewBox="0 0 28 28"><path d="M1 8l6-5 4 0v20l-3 2H1z" fill="#e88828"/><path d="M8 8l6-5h4v18l-3 4H8z" fill="#30b838"/><path d="M15 8l6-5 6-1v17l-5 6h-7z" fill="#3080d8"/><path d="M2 8l6-5M9 8l6-5M16 8l7-5M3 12h4M9 12h4M16 12h6M3 21h4M9 21h4M16 20h6" stroke="#fff"/></symbol>
    <symbol id="t-info" viewBox="0 0 28 28"><path d="M10 2q15 2 16 16M10 7q9 1 11 11" fill="none" stroke="#3068c8" stroke-width="2.500"/><circle cx="10" cy="18" r="8.500" fill="#2878e0"/><path d="M10 12v2M8 17h2v6M7 23h6" fill="none" stroke="#fff" stroke-width="2.500"/></symbol>
    <symbol id="t-web" viewBox="0 0 28 28"><path d="M5 2h13l6 6v18H5z" fill="#fff" stroke="#2858a8" stroke-width="1.500"/><path d="M18 2v6h6" fill="none" stroke="#2858a8"/><circle cx="14" cy="16" r="6.500" fill="#2a80b8"/><path d="M11 11l4 2-2 5-4-2zM16 15l4 1-3 5z" fill="#38b050"/></symbol>
    <symbol id="t-clock" viewBox="0 0 28 28"><circle cx="14" cy="14" r="11.500" fill="#dfe9f4" stroke="#666" stroke-width="2"/><path d="M14 5v9h8" fill="none" stroke="#222" stroke-width="2"/><path d="M14 4v1M14 23v1M4 14h1M23 14h1" stroke="#333" stroke-width="2"/></symbol>
    <symbol id="t-rain" viewBox="0 0 28 28"><path d="M2 1h10v26H2z" fill="url(#rainbow)"/><path d="M14 7l9 17" stroke="#111" stroke-width="3"/><path d="M10 6h6v6h-6z" fill="#fff"/></symbol>
    <symbol id="t-wand" viewBox="0 0 28 28"><path d="M3 3h9v18H3z" fill="#3a78c8"/><path d="M3 7h9M3 11h9M3 15h9" stroke="#8bf"/><path d="M12 8h15l-9 4h-6M16 15h8" fill="none" stroke="#2858a8" stroke-width="2"/><path d="M14 8l9 16" stroke="#111" stroke-width="3"/><path d="M2 24h9" stroke="#d8c030" stroke-width="3"/></symbol>
    <symbol id="t-robot" viewBox="0 0 28 28"><path d="M10 3q6-3 9 0h6v4l-4 1-3-2-5 8 2 5-6 4-4-3 2-5 6-9-4 1z" fill="#ddd" stroke="#444" stroke-width="1.500"/><path d="M2 20l8-2 10 4v4H3z" fill="#ccc" stroke="#334a90"/><circle cx="6" cy="23" r="4" fill="#f0a030"/></symbol>
  </svg>

  <div class="app">
    <header class="titlebar">
      <svg class="logo"><use href="#nx"/></svg>
      <h1>NX 10.0.3.5 - 加工 - [001.prt （修改的） ]</h1>
      <span class="brand">SIEMENS</span>
      <button class="win" aria-label="Minimize"><svg viewBox="0 0 22 22"><path d="M5 13h8v4H5z"/></svg></button>
      <button class="win" aria-label="Maximize"><svg viewBox="0 0 22 22"><path d="M4 4h14v13H4zm1 4v8h12V8z" fill-rule="evenodd"/></svg></button>
      <button class="win close" aria-label="Close"><svg viewBox="0 0 22 22"><path d="M5 5l12 12M17 5L5 17" stroke="#fff" stroke-width="3"/></svg></button>
    </header>

    <nav class="menubar">
      <span class="grip"></span>
      <svg class="menu-icon"><use href="#tool"/></svg>
      <button>文件(<u>F</u>)</button>
      <button>编辑(<u>E</u>)</button>
      <button>视图(<u>V</u>)</button>
      <button>插入(<u>S</u>)</button>
      <button>格式(<u>R</u>)</button>
      <button>工具(<u>T</u>)</button>
      <button>装配(<u>A</u>)</button>
      <button>信息(<u>I</u>)</button>
      <button class="spaced">分析(<u>L</u>)</button>
      <button>首选项(<u>P</u>)</button>
      <button>浩强工具v2.58</button>
      <button>窗口(<u>O</u>)</button>
      <button>GC工具箱</button>
      <button>星空外挂 V6.935F</button>
      <button>帮助(<u>H</u>)</button>
      <span class="fill"></span>
      <button class="mdi" aria-label="Minimize document"><svg viewBox="0 0 18 18"><path d="M5 12h8v2H5z"/></svg></button>
      <button class="mdi" aria-label="Restore document"><svg viewBox="0 0 18 18"><path d="M7 4h7v7h-2M4 7h7v6H4zM4 8h7" fill="none" stroke="#444" stroke-width="1.500"/></svg></button>
      <button class="mdi" disabled aria-label="Close document"><svg viewBox="0 0 18 18"><path d="M5 5l8 8M13 5l-8 8" stroke="#aaa" stroke-width="2"/></svg></button>
    </nav>

    <div class="row">
      <div class="group g-std">
        <span class="grip"></span>
        <button class="start"><svg><use href="#nx"/></svg>启动<i></i></button>
        <button class="tb dim" aria-label="New"><svg><use href="#new"/></svg></button>
        <button class="tb dim" aria-label="Open"><svg><use href="#open"/></svg></button>
        <button class="tb dim" aria-label="Save"><svg><use href="#save"/></svg></button>
        <button class="tb dim" aria-label="Print"><svg><use href="#print"/></svg></button>
        <span class="sep"></span>
        <button class="tb dim" aria-label="Cut"><svg><use href="#cut"/></svg></button>
        <button class="tb dim" aria-label="Copy"><svg><use href="#copy"/></svg></button>
        <button class="tb dim" aria-label="Paste"><svg><use href="#paste"/></svg></button>
        <button class="tb dim" aria-label="Delete"><svg><use href="#del"/></svg></button>
        <span class="sep"></span>
        <button class="tb dim" aria-label="Undo"><svg><use href="#undo"/></svg></button>
        <button class="caret" aria-label="Undo list"></button>
        <span class="sep"></span>
        <button class="tb" aria-label="WCS"><svg><use href="#wcs"/></svg></button>
        <button class="caret" aria-label="WCS list"></button>
        <span class="sep"></span>
        <button class="tb" aria-label="Information"><svg><use href="#info"/></svg></button>
        <span class="sep"></span>
        <label class="search"><input type="text" placeholder="查找命令" aria-label="查找命令"><svg viewBox="0 0 20 20"><circle cx="11" cy="7" r="5" fill="#fff" stroke="#444" stroke-width="1.500"/><circle cx="11" cy="7" r="2.500" fill="none" stroke="#777"/><path d="M8 11l-5 6" stroke="#444" stroke-width="3"/></svg></label>
        <button class="caret end" aria-label="Toolbar options"></button>
      </div>
      <div class="group g-view">
        <span class="grip"></span>
        <button class="tb" aria-label="Fit"><svg><use href="#fit"/></svg></button>
        <button class="caret" aria-label="Fit list"></button>
        <button class="tb" aria-label="Orient"><svg><use href="#clip"/></svg></button>
        <button class="caret" aria-label="Orient list"></button>
        <button class="tb" aria-label="Shading"><svg><use href="#ball"/></svg></button>
        <button class="caret" aria-label="Shading list"></button>
        <button class="tb" aria-label="Wireframe"><svg><use href="#cube"/></svg></button>
        <button class="tb" aria-label="Clip section"><svg><use href="#persp"/></svg></button>
        <button class="tb" aria-label="Edit section"><svg><use href="#persp2"/></svg></button>
        <button class="caret" aria-label="Section list"></button>
        <button class="tb" aria-label="Background"><svg><use href="#bg"/></svg></button>
        <button class="caret" aria-label="Background list"></button>
        <span class="sep"></span>
        <button class="tb" aria-label="Show"><svg><use href="#book"/></svg></button>
        <button class="tb" aria-label="Show and hide"><svg><use href="#book2"/></svg></button>
        <button class="caret end" aria-label="Toolbar options"></button>
      </div>
      <div class="group g-util">
        <span class="grip"></span>
        <button class="tb" aria-label="Layers"><svg><use href="#layers"/></svg></button>
        <button class="tb" aria-label="Nodes"><svg><use href="#nodes"/></svg></button>
        <button class="caret" aria-label="Nodes list"></button>
        <span class="sep"></span>
        <button class="tb" aria-label="Select"><svg><use href="#hand"/></svg></button>
        <button class="tb" aria-label="Display"><svg><use href="#palette"/></svg></button>
        <span class="sep"></span>
        <button class="tb" aria-label="Show hide"><svg><use href="#play"/></svg></button>
        <button class="caret" aria-label="Show hide list"></button>
        <span class="sep"></span>
        <button class="tb" aria-label="Distance"><svg><use href="#dist"/></svg></button>
        <button class="caret" aria-label="Distance list"></button>
        <button class="tb" aria-label="Measure"><svg><use href="#ruler"/></svg></button>
        <button class="caret end" aria-label="Toolbar options"></button>
      </div>
      <div class="group g-rest">
        <span class="grip"></span>
        <button class="tb" aria-label="Units"><svg><use href="#inch"/></svg></button>
        <button class="tb" aria-label="Material"><svg><use href="#olive"/></svg></button>
        <span class="fill"></span>
        <button class="more" aria-label="More">»<i></i></button>
      </div>
    </div>

    <div class="row">
      <div class="group g-curve dim">
        <span class="grip"></span>
        <button class="tb" aria-label="Line"><svg><use href="#line"/></svg></button>
        <button class="caret" aria-label="Line list"></button>
        <button class="tb" aria-label="Basic line"><svg><use href="#line"/></svg></button>
        <button class="tb" aria-label="Arc"><svg><use href="#arc"/></svg></button>
        <button class="tb" aria-label="Text"><svg><use href="#texta"/></svg></button>
        <button class="tb" aria-label="Offset"><svg><use href="#offset"/></svg></button>
        <button class="tb" aria-label="Sheet"><svg><use href="#sheet"/></svg></button>
        <button class="tb" aria-label="Bridge"><svg><use href="#curve1"/></svg></button>
        <button class="tb" aria-label="Combine"><svg><use href="#curve2"/></svg></button>
        <button class="tb" aria-label="Project"><svg><use href="#project"/></svg></button>
        <button class="tb" aria-label="Intersect"><svg><use href="#intersect"/></svg></button>
        <button class="tb" aria-label="Wrap"><svg><use href="#roll"/></svg></button>
        <button class="caret end" aria-label="Toolbar options"></button>
      </div>
      <div class="group g-edit dim">
        <span class="grip"></span>
        <button class="tb" aria-label="Trim"><svg><use href="#trim"/></svg></button>
        <button class="tb" aria-label="Corner"><svg><use href="#cross"/></svg></button>
        <button class="tb" aria-label="Divide"><svg><use href="#scurve"/></svg></button>
        <button class="tb" aria-label="Length"><svg><use href="#hook"/></svg></button>
        <button class="caret end" aria-label="Toolbar options"></button>
      </div>
      <div class="group g-sync dim">
        <span class="grip"></span>
        <button class="tb" aria-label="Move face"><svg><use href="#b-move"/></svg></button>
        <button class="tb" aria-label="Copy face"><svg><use href="#b-copy"/></svg></button>
        <button class="tb" aria-label="Pattern face"><svg><use href="#b-list"/></svg></button>
        <button class="tb" aria-label="Delete face"><svg><use href="#b-x"/></svg></button>
        <button class="tb" aria-label="Optimize face"><svg><use href="#b-wand"/></svg></button>
        <button class="caret" aria-label="Face list"></button>
        <button class="caret end" aria-label="Toolbar options"></button>
      </div>
    </div>

    <div class="row">
      <div class="group g-mfg dim">
        <span class="grip"></span>
        <button class="tb" aria-label="Geometry"><svg><use href="#frame"/></svg></button>
        <button class="tb" aria-label="Program"><svg><use href="#docs"/></svg></button>
        <button class="tb" aria-label="Method"><svg><use href="#bottle"/></svg></button>
        <button class="tb" aria-label="Operation"><svg><use href="#tool"/></svg></button>
        <button class="tb" aria-label="Edit"><svg><use href="#tools2"/></svg></button>
        <button class="tb" aria-label="Copy operation"><svg><use href="#tool-doc"/></svg></button>
        <button class="tb" aria-label="Move operation"><svg><use href="#tool-arrow"/></svg></button>
        <button class="tb" aria-label="Wall"><svg><use href="#wall"/></svg></button>
        <button class="tb" aria-label="Tool setup"><svg><use href="#tool-wrench"/></svg></button>
        <button class="tb" aria-label="Postprocess"><svg><use href="#post"/></svg></button>
        <button class="tb" aria-label="Machine"><svg><use href="#machine"/></svg></button>
        <button class="tb" aria-label="Panel"><svg><use href="#panel"/></svg></button>
        <button class="tb" aria-label="Head"><svg><use href="#head"/></svg></button>
        <button class="tb" aria-label="Annotation"><svg><use href="#apad"/></svg></button>
        <button class="tb" aria-label="Edit note"><svg><use href="#pencil"/></svg></button>
        <button class="tb" aria-label="Folder"><svg><use href="#folder"/></svg></button>
        <button class="tb" aria-label="Pages"><svg><use href="#pages"/></svg></button>
        <button class="tb" aria-label="Ramp"><svg><use href="#ramp"/></svg></button>
        <button class="tb" aria-label="Shop doc"><svg><use href="#shop"/></svg></button>
        <button class="tb" aria-label="Print doc"><svg><use href="#print"/></svg></button>
        <button class="tb" aria-label="Synchronize"><svg><use href="#loop"/></svg></button>
        <button class="tb" aria-label="Library"><svg><use href="#mix"/></svg></button>
        <button class="tb" aria-label="Screen"><svg><use href="#screen"/></svg></button>
        <button class="tb" aria-label="Timer"><svg><use href="#timer"/></svg></button>
        <button class="caret end" aria-label="Toolbar options"></button>
      </div>
      <div class="group g-oper dim">
        <span class="grip"></span>
        <button class="tb" aria-label="Edit object"><svg><use href="#tool-wrench"/></svg></button>
        <button class="tb" aria-label="Cut object"><svg><use href="#tool-cut"/></svg></button>
        <button class="tb" aria-label="Copy object"><svg><use href="#tool-doc"/></svg></button>
        <button class="tb" aria-label="Duplicate object"><svg><use href="#tool-docs"/></svg></button>
        <button class="tb" aria-label="Paste object"><svg><use href="#paste"/></svg></button>
        <button class="tb" aria-label="Delete object"><svg><use href="#tool-x"/></svg></button>
        <button class="tb" aria-label="Object info"><svg><use href="#tool-info"/></svg></button>
        <button class="tb" aria-label="Segment"><svg><use href="#tool-seg"/></svg></button>
        <button class="caret end" aria-label="Toolbar options"></button>
      </div>
    </div>

    <div class="row selection">
      <span class="combo"><select aria-label="Type filter"><option>实体</option></select><b></b></span>
      <span class="combo"><select aria-label="Selection scope"><option>仅在工作部件内</option></select><b></b></span>
      <button class="sb" aria-label="Link"><svg><use href="#link"/></svg></button>
      <span class="sep"></span>
      <button class="sb" aria-label="Filter"><svg><use href="#filter"/></svg></button>
      <button class="sb" aria-label="Snap"><svg><use href="#snapr"/></svg></button>
      <button class="caret" aria-label="Snap list"></button>
      <button class="sb" aria-label="Restore"><svg><use href="#undo2"/></svg></button>
      <button class="sb" aria-label="Elbow"><svg><use href="#elbow"/></svg></button>
      <span class="sep"></span>
      <button class="sb" aria-label="Polygon"><svg><use href="#hexd"/></svg></button>
      <button class="sb" aria-label="Rectangle"><svg><use href="#marq"/></svg></button>
      <button class="caret" aria-label="Rectangle list"></button>
      <span class="sep"></span>
      <button class="sb" aria-label="Shell"><svg><use href="#shell"/></svg></button>
      <button class="sb" aria-label="Solid"><svg><use href="#solid"/></svg></button>
      <span class="sep"></span>
      <span class="combo"><select disabled aria-label="Face rule"><option>单个面</option></select><b></b></span>
      <span class="combo"><select disabled aria-label="Curve rule"><option>单条曲线</option></select><b></b></span>
      <span class="combo"><select disabled aria-label="Body rule"><option>单个体</option></select><b></b></span>
      <button class="sb" aria-label="Hierarchy"><svg><use href="#seltree"/></svg></button>
      <button class="sb" aria-label="Next"><svg><use href="#arrowt"/></svg></button>
      <span class="sep"></span>
      <button class="sb" aria-label="Move"><svg><use href="#s-move"/></svg></button>
      <button class="sb" aria-label="End point"><svg><use href="#s-end"/></svg></button>
      <button class="sb" aria-label="Mid point"><svg><use href="#s-mid"/></svg></button>
      <button class="sb" aria-label="Control point"><svg><use href="#s-curve"/></svg></button>
      <button class="sb" aria-label="Intersection"><svg><use href="#s-int"/></svg></button>
      <button class="sb" aria-label="Center"><svg><use href="#s-cen"/></svg></button>
      <button class="sb" aria-label="Quadrant"><svg><use href="#s-quad"/></svg></button>
      <button class="sb" aria-label="Existing point"><svg><use href="#s-plus"/></svg></button>
      <button class="sb" aria-label="Point on curve"><svg><use href="#s-on"/></svg></button>
      <button class="sb" aria-label="Point on face"><svg><use href="#s-face"/></svg></button>
      <span class="sep"></span>
      <button class="sb" aria-label="Grid"><svg><use href="#s-grid"/></svg></button>
      <span class="fill"></span>
      <button class="caret end" aria-label="Toolbar options"></button>
    </div>

    <main class="work">
      <section class="viewport">
        <!-- Fixture plate -->
        <svg class="model" viewBox="0 0 540 410">
          <circle cx="375" cy="77" r="32" fill="#3430d0"/>
          <circle cx="375" cy="77" r="9" fill="none" stroke="#3d9bff" stroke-width="4"/>
          <g transform="scale(.3444 .3333)" stroke="#29353a" stroke-width="2.500" stroke-linejoin="round">
            <path d="M47 875L55 882 690 995V1185L50 1068z" fill="#6b777b" stroke="none"/>
            <path d="M690 995h22V1180l-22 5z" fill="#748286"/>
            <path d="M712 992L1505 360 1503 548 712 1180z" fill="#839194" stroke="none"/>
            <path d="M50 873L830 240Q850 228 880 234L1015 260 1098 270V372L1160 382 1265 308 1505 350V362L712 992 690 995z" fill="#c1d5db" stroke="none"/>
            <path d="M50 878L690 995H712L1505 362" fill="none" stroke-width="4" stroke-dasharray="14 4"/>
            <path d="M55 882V1068" fill="none"/>
            <g id="pocket">
              <path d="M302 762Q304 742 345 742L489 762 486 833 385 815V780Q308 785 302 762z" fill="#717d81"/>
              <path d="M385 746V782Q308 788 302 762 304 742 345 742z" fill="#87959a"/>
              <path d="M345 742L489 762" fill="none" stroke-width="5" stroke-dasharray="14 4"/>
              <path d="M489 762L547 718 549 785 478 848 469 850 486 833z" fill="#839194"/>
              <path d="M489 762L547 718" fill="none" stroke-width="4"/>
              <path d="M290 836L310 830 361 793 363 853 305 843q-18-1-15-7z" fill="#839194"/>
            </g>
            <g id="well">
              <path d="M549 800V788Q560 770 595 772L658 788 655 812 600 804 566 807z" fill="#7b898d"/>
              <path d="M655 790L731 808 735 815 721 820 658 865z" fill="#66737a"/>
              <path d="M474 858L566 805 600 802 653 812V862Q645 884 605 882L493 863z" fill="#c1d5db"/>
              <path d="M661 863L701 868Q722 880 719 892 712 912 661 908z" fill="#7b898d"/>
              <path d="M682 866V908M663 910L532 888 486 925M600 774V802" fill="none"/>
              <path d="M549 788Q560 768 595 771L658 785" fill="none" stroke="#edf6f8" stroke-width="5"/>
              <path d="M549 784Q560 764 595 767L658 781" fill="none" stroke-width="2"/>
            </g>
            <use href="#pocket" x="177" y="-143"/><use href="#well" x="177" y="-143"/>
            <use href="#pocket" x="354" y="-286"/><use href="#well" x="354" y="-286"/>
            <use href="#pocket" x="531" y="-429"/>
            <path d="M1020 335L1098 270V372L1024 415 1005 430z" fill="#839194"/>
            <path d="M1020 335V400L1005 416Q1000 432 1020 436L1120 452M1098 373L1160 382 1180 370M1017 495L1072 462 1120 470" fill="none"/>
            <path d="M1240 376l25 4q6 8-25 12zM1240 452q18 8 6 22l-6 2z" fill="#6a777b"/>
            <path d="M290 920L369 860 370 930 382 945 292 1022z" fill="#839194"/>
            <path d="M374 936L387 918 421 915 486 928 459 955 421 942 387 947z" fill="#7b898d"/>
            <path d="M372 930Q385 912 421 914L484 926" fill="none" stroke="#edf6f8" stroke-width="5"/>
            <path d="M292 1022L382 945 416 940 455 948 453 1050z" fill="#c1d5db"/>
            <path d="M970 720L1115 610Q1135 592 1205 600L1203 680 1018 828 1015 750z" fill="#839194"/>
            <path d="M1115 610Q1135 592 1205 600L1203 680 1115 678z" fill="#76848a"/>
            <path d="M1152 600V675M1163 600V675" fill="none"/>
            <path d="M1018 752L1095 690Q1120 672 1203 680L1018 828z" fill="#c1d5db"/>
            <path d="M1018 260L1098 270 1035 315 1010 290z" fill="#dfe300" stroke="none"/>
            <path d="M1070 300L1098 280V325L1050 320z" fill="#b8bf60" stroke="none" opacity=".6"/>
            <path d="M882 188L910 165 1015 182 985 208z" fill="#c1d5db"/>
            <path d="M880 190L985 208V296L878 282z" fill="#737f83"/>
            <path d="M985 208L1015 184V275L985 296z" fill="#97a279"/>
            <path d="M675 370L735 325 795 338 742 376z" fill="#c1d5db"/>
            <path d="M675 372L742 378 740 422 675 412z" fill="#737f83"/>
            <path d="M742 378L795 340V385L744 422z" fill="#839194"/>
            <path d="M332 507L405 450 462 458 388 514z" fill="#c1d5db"/>
            <path d="M330 508L388 514 385 702 326 693z" fill="#737f83"/>
            <path d="M388 514L462 458V645L385 702z" fill="#839194"/>
            <path d="M1122 415L1183 372 1240 380 1178 425z" fill="#c1d5db"/>
            <path d="M1120 418L1178 425 1176 566 1118 555z" fill="#737f83"/>
            <path d="M1178 425L1240 380 1238 520 1176 566z" fill="#839194"/>
          </g>
          <path d="M269 140L267 85l3-53 3 53z" fill="#1838d8"/><path d="M266 53l4-22 5 22z" fill="#1838d8"/>
          <path d="M269 140L225 130 162 121" fill="none" stroke="#1f8a2c" stroke-width="2"/><path d="M161 121l25-1-3 7zM222 129l10 1v5l34 5z" fill="#1f8a2c"/>
          <path d="M270 140L316 104" stroke="#e02028" stroke-width="2"/><path d="M270 140l11-14 15-6-11 13zM303 108l14-5-8 12z" fill="#e02028"/><circle cx="308" cy="109" r="4" fill="#a81822"/>
          <g class="axis">
            <text x="248" y="29" fill="#1f3fe0">ZM</text><text x="249" y="80" fill="#1f3fe0">ZC</text>
            <text x="162" y="116" fill="#2a8c36">YM</text><text x="211" y="125" fill="#2a8c36">YC</text>
            <text x="298" y="99" fill="#d83038">XM</text><text x="278" y="116" fill="#d83038">XC</text>
          </g>
        </svg>
        <!-- View triad -->
        <svg class="triad" viewBox="0 0 90 70">
          <path d="M28 24l12-8 25 4v24L52 54l-24-4z" fill="#b4b4b4"/>
          <path d="M52 53L12 47" stroke="#229a30" stroke-width="2"/><path d="M10 46l12-1v5z" fill="#229a30"/>
          <path d="M52 53l22-14" stroke="#e03038" stroke-width="3"/>
          <path d="M53 53V16" stroke="#1838d8" stroke-width="3"/><path d="M49 24l4-11 4 11z" fill="#1838d8"/>
          <circle cx="52" cy="53" r="5" fill="#ddd"/>
          <g class="axis"><text x="48" y="12" fill="#1838d8">Z</text><text x="4" y="52" fill="#229a30">Y</text><text x="70" y="42" fill="#e03038">X</text></g>
        </svg>
        <figure class="school">
          <svg viewBox="0 0 84 80">
            <circle cx="31" cy="16" r="7.500" fill="#f0561c"/>
            <path d="M43 8q17-1 24 6 13 16-1 38-4 6-9 9 17-24 7-40-6-11-21-13z" fill="url(#qblue)"/>
            <path d="M45 6q6-1 8-3h9q-2 4-7 4z" fill="#22a8d0"/>
            <path d="M62 31Q47 20 26 27 8 38 10 52q3 11 15 16 20-7 32 1 12 3 23-5-5 12-17 15-13-4-22-8-14-1-13 0 4-3 8-3-14-7-17-19 0-15 14-22 12-5 29-1z" fill="url(#qblue)"/>
            <path d="M42 60V31q20 14 9 26zM40 60V43q-8 8-7 15z" fill="#12328e"/>
          </svg>
          <strong>千言教育</strong>
          <figcaption>QIANYAN EDUCATION</figcaption>
        </figure>
        <p class="caption first">没有激流则谈不上勇进,</p>
        <p class="caption second">没有山峰则谈不上攀登。</p>
      </section>

      <div class="side-tools">
        <div class="vgroup dim">
          <span class="hgrip"></span>
          <button class="vb" aria-label="Create program"><svg><use href="#v-docs"/></svg></button>
          <button class="vb" aria-label="Create tool"><svg><use href="#v-tool"/></svg></button>
          <button class="vb" aria-label="Create geometry"><svg><use href="#v-box"/></svg></button>
          <button class="vb" aria-label="Create method"><svg><use href="#v-rule"/></svg></button>
          <button class="vb" aria-label="Create operation"><svg><use href="#v-mill"/></svg></button>
          <button class="left" aria-label="Toolbar options"></button>
        </div>
        <div class="vgroup dim">
          <span class="hgrip"></span>
          <button class="vb" aria-label="Program view"><svg><use href="#h-docs"/></svg></button>
          <button class="vb" aria-label="Tool view"><svg><use href="#h-tool"/></svg></button>
          <button class="vb" aria-label="Geometry view"><svg><use href="#h-box"/></svg></button>
          <button class="vb" aria-label="Method view"><svg><use href="#h-rule"/></svg></button>
          <button class="left" aria-label="Toolbar options"></button>
        </div>
        <div class="vgroup dim">
          <span class="hgrip"></span>
          <button class="vb" aria-label="Generate"><svg><use href="#tool"/></svg></button>
          <button class="vb" aria-label="Edit path"><svg><use href="#p-wrench"/></svg></button>
          <button class="vb" aria-label="Delete path"><svg><use href="#p-x"/></svg></button>
          <button class="vb" aria-label="Replay path"><svg><use href="#p-redo"/></svg></button>
          <button class="vb" aria-label="List path"><svg><use href="#p-doc"/></svg></button>
          <button class="vb" aria-label="Verify"><svg><use href="#c-box"/></svg></button>
          <button class="vb" aria-label="Vericut"><svg><use href="#vpad"/></svg></button>
          <button class="vb" aria-label="Simulate"><svg><use href="#c-mach"/></svg></button>
          <button class="vb" aria-label="Check"><svg><use href="#c-base"/></svg></button>
          <span class="hsep"></span>
          <button class="vb lit" aria-label="Holder"><svg><use href="#shank"/></svg></button>
          <button class="left" aria-label="Toolbar options"></button>
        </div>
      </div>

      <aside class="navigator">
        <h2><span class="pin"></span>工序导航器 － 程序顺序</h2>
        <div class="list">
          <div class="list-head">名称</div>
          <ul class="tree">
            <li><span class="code root">NC_PROGRAM</span></li>
            <li><span class="cell first"></span><svg><use href="#prog"/></svg>未用项</li>
            <li><span class="cell last"><button class="exp">−</button></span><svg class="st"><use href="#stop"/></svg><svg><use href="#prog"/></svg><span class="code">PROGRAM</span></li>
            <li><span class="cell none"></span><span class="cell last"><button class="exp">−</button></span><svg class="st"><use href="#stop"/></svg><svg><use href="#prog"/></svg><span class="code">TOP</span></li>
            <li><span class="cell none"></span><span class="cell none"></span><span class="cell"><button class="exp">−</button></span><svg class="st"><use href="#warn"/></svg><svg><use href="#prog"/></svg><span class="code">00101</span></li>
            <li class="picked"><span class="cell none"></span><span class="cell none"></span><span class="cell pass"></span><span class="cell last"></span><svg class="st"><use href="#warn"/></svg><svg><use href="#oper"/></svg>等高一次性倒角</li>
            <li><span class="cell none"></span><span class="cell none"></span><span class="cell"><button class="exp">+</button></span><svg class="st"><use href="#stop"/></svg><svg><use href="#prog"/></svg><span class="code">00102</span></li>
            <li><span class="cell none"></span><span class="cell none"></span><span class="cell"></span><svg class="st"><use href="#okay"/></svg><svg><use href="#prog"/></svg><span class="code">00103</span></li>
            <li><span class="cell none"></span><span class="cell none"></span><span class="cell"></span><svg class="st"><use href="#okay"/></svg><svg><use href="#prog"/></svg><span class="code">00104</span></li>
            <li><span class="cell none"></span><span class="cell none"></span><span class="cell"></span><svg class="st"><use href="#okay"/></svg><svg><use href="#prog"/></svg><span class="code">00105</span></li>
            <li><span class="cell none"></span><span class="cell none"></span><span class="cell last"></span><svg class="st"><use href="#okay"/></svg><svg><use href="#prog"/></svg><span class="code">00106</span></li>
            <li></li><li></li><li></li><li></li><li></li><li></li><li></li>
            <li></li><li></li><li></li><li></li><li></li><li></li><li></li>
            <li></li><li></li><li></li><li></li><li></li><li></li><li></li>
          </ul>
          <div class="scroll">
            <button aria-label="Scroll left"><svg viewBox="0 0 10 10"><path d="M7 1L3 5l4 4" fill="none" stroke="#444" stroke-width="2"/></svg></button>
            <span class="thumb"></span>
            <span class="fill"></span>
            <button aria-label="Scroll right"><svg viewBox="0 0 10 10"><path d="M3 1l4 4-4 4" fill="none" stroke="#444" stroke-width="2"/></svg></button>
          </div>
        </div>
        <div class="splitter"><span></span></div>
      </aside>

      <div class="tabs">
        <button class="gear" aria-label="Settings"><svg><use href="#gear"/></svg></button>
        <button class="tab" aria-label="Assembly navigator"><svg><use href="#t-asm"/></svg></button>
        <button class="tab" aria-label="Constraint navigator"><svg><use href="#t-con"/></svg></button>
        <button class="tab" aria-label="Part navigator"><svg><use href="#t-part"/></svg></button>
        <button class="tab active" aria-label="Operation navigator"><svg><use href="#t-op"/></svg></button>
        <button class="tab" aria-label="Machine navigator"><svg><use href="#t-mach"/></svg></button>
        <button class="tab" aria-label="Work cell"><svg><use href="#t-cell"/></svg></button>
        <button class="tab" aria-label="Reuse library"><svg><use href="#t-books"/></svg></button>
        <button class="tab apart" aria-label="HD3D tools"><svg><use href="#t-info"/></svg></button>
        <button class="tab apart" aria-label="Web browser"><svg><use href="#t-web"/></svg></button>
        <button class="tab apart" aria-label="History"><svg><use href="#t-clock"/></svg></button>
        <button class="tab" aria-label="Materials"><svg><use href="#t-rain"/></svg></button>
        <button class="tab" aria-label="Process studio"><svg><use href="#t-wand"/></svg></button>
        <button class="tab" aria-label="Wizards"><svg><use href="#t-robot"/></svg></button>
        <button class="tab stub" aria-label="Roles"><svg viewBox="0 0 30 20"><path d="M0 15q4-6 9-4h17v5q-8-2-12 2-8 3-14-3z" fill="#eee" stroke="#666" stroke-width="1.500"/><path d="M11 13h4" stroke="#d33" stroke-width="2"/><path d="M16 13h5" stroke="#39d" stroke-width="2"/></svg></button>
        <div class="steps">
          <button disabled aria-label="First tab"><svg viewBox="0 0 16 16"><path d="M4 4h8M4 10l4-4 4 4z" stroke="#aaa" fill="#aaa"/></svg></button>
          <button disabled aria-label="Previous tab"><svg viewBox="0 0 16 16"><path d="M4 10l4-4 4 4z" fill="#aaa"/></svg></button>
          <button aria-label="Next tab"><svg viewBox="0 0 16 16"><path d="M4 6h8l-4 4z" fill="#444"/></svg></button>
          <button aria-label="Last tab"><svg viewBox="0 0 16 16"><path d="M4 4h8L8 8zM4 11h8" stroke="#444" fill="#444"/></svg></button>
        </div>
      </div>
    </main>

    <div class="row bottom">
      <div class="group g-bottom dim">
        <span class="grip"></span>
        <button class="tb" aria-label="Absolute"><svg><use href="#abs"/></svg></button>
        <button class="tb" aria-label="Dimension"><svg><use href="#xdim"/></svg></button>
        <button class="tb" aria-label="Stack"><svg><use href="#stack"/></svg></button>
        <button class="tb" aria-label="Back"><svg><use href="#aleft"/></svg></button>
        <button class="tb" aria-label="Forward"><svg><use href="#aright"/></svg></button>
        <button class="tb" aria-label="Swap"><svg><use href="#swap"/></svg></button>
        <button class="tb" aria-label="Boxes"><svg><use href="#boxes"/></svg></button>
        <button class="tb" aria-label="Mount"><svg><use href="#mount"/></svg></button>
        <button class="tb" aria-label="Measure block"><svg><use href="#house"/></svg></button>
        <button class="tb" aria-label="Bounding box"><svg><use href="#cubef"/></svg></button>
        <button class="tb" aria-label="Radius"><svg><use href="#radius"/></svg></button>
        <button class="tb" aria-label="Isometric"><svg><use href="#iso"/></svg></button>
        <button class="tb" aria-label="Surface"><svg><use href="#wave"/></svg></button>
        <button class="tb" aria-label="Patch"><svg><use href="#patch"/></svg></button>
        <button class="tb" aria-label="Probe"><svg><use href="#probe"/></svg></button>
        <button class="tb" aria-label="Pull"><svg><use href="#bucket"/></svg></button>
        <button class="tb" aria-label="Core"><svg><use href="#redc"/></svg></button>
        <button class="tb" aria-label="Planes"><svg><use href="#planes"/></svg></button>
        <button class="tb" aria-label="Merge"><svg><use href="#merge"/></svg></button>
        <button class="tb" aria-label="Split"><svg><use href="#split"/></svg></button>
        <button class="tb" aria-label="Rectangle"><svg><use href="#rect"/></svg></button>
        <button class="caret" aria-label="Rectangle list"></button>
        <button class="tb" aria-label="Polygon"><svg><use href="#hexg"/></svg></button>
        <button class="caret" aria-label="Polygon list"></button>
        <button class="tb" aria-label="CSYS"><svg><use href="#csys"/></svg></button>
        <button class="tb" aria-label="Centre grid"><svg><use href="#redg"/></svg></button>
        <button class="tb" aria-label="Hole"><svg><use href="#obox"/></svg></button>
        <button class="tb" aria-label="Blade"><svg><use href="#blade"/></svg></button>
        <button class="tb" aria-label="Ghost box"><svg><use href="#dashb"/></svg></button>
        <button class="tb" aria-label="Cone"><svg><use href="#cone"/></svg></button>
        <button class="tb" aria-label="Circle"><svg><use href="#circ"/></svg></button>
        <button class="caret end" aria-label="Toolbar options"></button>
      </div>
    </div>

    <footer class="status">
      <span class="cue"></span>
      <span class="message"></span>
      <span class="slot"></span>
      <button aria-label="Full screen"><svg viewBox="0 0 20 20"><path d="M1 5V1h4M15 1h4v4M19 15v4h-4M5 19H1v-4" fill="none" stroke="#999" stroke-width="1.500"/><path d="M4 4h12v12H4z" fill="#333"/><path d="M5 7h10v8H5z" fill="#fff"/><path d="M6 9h8v4H6z" fill="#38a"/></svg></button>
      <button aria-label="NX"><svg><use href="#nx"/></svg></button>
      <span class="tail"></span>
    </footer>
  </div>
</body>
</html>
```
FILE: styles.css
```css
* {
  box-sizing: border-box;
}
body {
  margin: 0;
  min-height: 100vh;
  display: grid;
  grid-template-columns: 190fr 1538fr 192fr;
  font-family: "Liberation Serif", "Noto Sans CJK SC", sans-serif;
  font-size: 14px;
  color: #111;
  background: #1a1a1a;
}
body::before,
body::after {
  content: "";
}
body::before {
  background: linear-gradient(178deg, #a0a0a0, #999 8%, #7c7c7c 17%, #575757 26%, #404040 33%, #333 42%, #323334 60%, #3b3c3e 73%, #555557 83%, #7c7c7e 98%);
}
body::after {
  order: 3;
  background: linear-gradient(#b8b6b7, #bcbabb 9%, #cfcdce 19%, #dedcdd 29%, #e6e6e6 45%, #ececec 65%, #e2e2e2 84%, #cfcfcf);
}
.defs {
  position: absolute;
  width: 0;
  height: 0;
}
.sprite {
  display: none;
}
button {
  font: inherit;
  color: inherit;
  border: 0;
  padding: 0;
  background: none;
}
svg {
  display: block;
  flex: none;
}
.fill {
  flex: 1;
}
.app {
  min-width: 0;
  display: flex;
  flex-direction: column;
  border-left: 3px solid #161616;
  border-bottom: 3px solid #161616;
}

/* title bar */
.titlebar {
  height: 35px;
  padding: 8px 2px 0 3px;
  display: flex;
  align-items: flex-start;
  gap: 4px;
  color: #eee;
  background: linear-gradient(#747275, #4b4b4d 11px, #1b1c1e 11px, #1b1c1e 34px, #000 34px);
}
.logo {
  width: 20px;
  height: 20px;
}
.titlebar h1 {
  flex: 1;
  margin: 0;
  font: 14px/22px "Noto Sans", "Noto Sans CJK SC", sans-serif;
}
.brand {
  margin-right: 24px;
  font: bold 15px/24px "Liberation Sans", sans-serif;
  color: #fff;
}
.win {
  width: 22px;
  height: 22px;
  border: 1px solid #777;
  border-radius: 3px;
  background: linear-gradient(#6b6b6d, #333);
  fill: #fff;
}
.win.close {
  border-color: #e0a090;
  background: linear-gradient(#ee8672, #c8301c);
}

/* menus */
.menubar {
  height: 26px;
  padding-bottom: 2px;
  display: flex;
  align-items: center;
  border-bottom: 1px solid #b4b4b4;
  background: linear-gradient(#f0f0f0, #dfdfdf);
}
.menubar button {
  min-width: 62px;
  padding-right: 13px;
  text-align: left;
  line-height: 20px;
  white-space: nowrap;
}
.menubar .spaced {
  min-width: 75px;
}
.menu-icon {
  width: 18px;
  height: 18px;
  margin-right: 5px;
}
.menubar .mdi {
  min-width: 0;
  width: 18px;
  height: 18px;
  margin-right: 4px;
  padding: 0;
  border: 1px solid #777;
  border-radius: 3px;
  background: #f2f2f2;
  fill: #444;
}
.menubar .mdi:disabled {
  border-color: #ccc;
}

/* toolbars */
.row {
  height: 38px;
  display: flex;
  background: linear-gradient(#dedede, #d0d0d0);
}
.group {
  min-width: 0;
  display: flex;
  align-items: stretch;
  border: solid #f8f8f8;
  border-width: 1px 1px 0 0;
  box-shadow: inset -1px -1px #b5b5b5;
  background: linear-gradient(#ebebeb, #d3d3d3);
}
.g-std { width: 674px; }
.g-view { width: 413px; }
.g-util { width: 330px; }
.g-rest { flex: 1; }
.g-curve { width: 422px; }
.g-edit { width: 164px; }
.g-sync { width: 211px; margin-left: 3px; }
.g-mfg { width: 864px; }
.g-oper { width: 302px; }
.g-bottom { width: 1062px; }
.grip {
  flex: none;
  width: 10px;
  margin: 6px 0 5px;
  background: radial-gradient(circle, #999 1px, transparent 1px) 3px 0 / 5px 4px repeat-y;
}
.menubar .grip {
  height: 18px;
  margin: 0;
}
.tb {
  flex: 0 1 35px;
  min-width: 0;
  display: flex;
  align-items: center;
  justify-content: center;
}
.tb svg {
  width: 26px;
  height: 26px;
}
.dim svg {
  opacity: 0.85;
}
.start {
  flex: none;
  width: 74px;
  display: flex;
  align-items: center;
  gap: 4px;
}
.start svg {
  width: 28px;
  height: 28px;
}
.caret {
  flex: 0 0 14px;
  display: flex;
  align-items: center;
  justify-content: center;
}
.caret::after,
.start i,
.more i {
  content: "";
  border: 3px solid transparent;
  border-top-color: #111;
  border-bottom: 0;
}
.caret.end {
  padding-top: 14px;
}
.sep {
  flex: 0 0 6px;
  background: linear-gradient(90deg, transparent 2px, #b8b8b8 2px, #b8b8b8 3px, #f6f6f6 3px, #f6f6f6 4px, transparent 4px);
}
.search {
  flex: none;
  width: 124px;
  height: 24px;
  margin: 6px 0 0 4px;
  padding: 0 2px;
  display: flex;
  align-items: center;
  border: 1px solid #aaa;
  background: #fff;
}
.search input {
  flex: 1;
  width: 0;
  min-width: 0;
  padding: 0;
  border: 0;
  font: inherit;
}
.search input::placeholder {
  color: #999;
}
.search svg {
  width: 20px;
  height: 20px;
}
.more {
  width: 16px;
  display: flex;
  flex-direction: column;
  align-items: center;
  font: bold 18px/16px "Liberation Sans", sans-serif;
}
.more i {
  margin-top: 8px;
}
.row.selection {
  height: 32px;
  padding: 2px 0 2px 6px;
  border-top: 1px solid #a0a0a0;
  background: linear-gradient(#e4e4e4, #d3d3d3);
}
.combo {
  flex: 0 0 137px;
  height: 19px;
  margin: 4px 8px 0 0;
  display: flex;
  border: 1px solid #888;
  border-radius: 3px;
  background: #fff;
}
.combo:first-child {
  flex-basis: 129px;
}
.combo select {
  flex: 1;
  min-width: 0;
  padding: 0;
  border: 0;
  appearance: none;
  font: inherit;
  line-height: 17px;
  color: #111;
  background: none;
}
.combo b {
  width: 18px;
  display: flex;
  align-items: center;
  justify-content: center;
  border-radius: 2px;
  background: linear-gradient(#bdd6f0, #5a8cc4);
}
.combo b::after {
  content: "";
  border: 7px solid transparent;
  border-top: 8px solid #111;
  border-bottom: 0;
}
.combo:has(select:disabled) {
  border-color: #aaa;
  background: #d2d2d2;
}
.combo select:disabled {
  color: #8c8c8c;
  opacity: 1;
}
.combo:has(select:disabled) b {
  background: #f2f2f2;
}
.combo:has(select:disabled) b::after {
  border-width: 7px 6px 0;
  border-top-color: #8a8a8a;
}
.sb {
  flex: 0 0 26px;
  display: flex;
  align-items: center;
  justify-content: center;
}
.sb svg {
  width: 19px;
  height: 19px;
}
.selection .caret {
  flex-basis: 10px;
}
.selection .caret.end {
  margin-right: 3px;
  padding-top: 8px;
}

/* work area */
.work {
  flex: 1;
  display: flex;
}
.viewport {
  flex: 1;
  position: relative;
  overflow: hidden;
  background: #323232;
}
.model {
  position: absolute;
  left: 167px;
  top: 173px;
  width: 540px;
  height: 410px;
}
.axis {
  font-family: "Noto Sans", sans-serif;
  font-size: 14px;
}
.triad {
  position: absolute;
  left: 13px;
  bottom: 52px;
  width: 90px;
  height: 70px;
}
.school {
  position: absolute;
  left: 168px;
  bottom: 0;
  width: 168px;
  height: 128px;
  margin: 0;
  padding-left: 6px;
  display: flex;
  flex-direction: column;
  align-items: center;
  background: #fff;
  font: bold 11px/14px "Liberation Sans", "Noto Sans CJK SC", sans-serif;
}
.school svg {
  width: 84px;
  height: 80px;
}
.school strong {
  font-size: 30px;
  font-weight: 500;
  line-height: 32px;
}
.caption {
  position: absolute;
  margin: 0;
  font: 300 36px/36px "Noto Sans CJK SC", sans-serif;
  color: #fff;
  white-space: nowrap;
}
.caption.first {
  left: 391px;
  bottom: 45px;
}
.caption.second {
  left: 647px;
  bottom: 9px;
}

.side-tools {
  flex: 0 0 38px;
  background: #cdcdcd;
}
.vgroup {
  padding-bottom: 1px;
  border-bottom: 1px solid #aaa;
  border-top: 1px solid #f8f8f8;
  display: flex;
  flex-direction: column;
  align-items: center;
  background: linear-gradient(90deg, #ebebeb, #d5d5d5);
}
.hgrip {
  width: 26px;
  height: 10px;
  margin-top: 3px;
  background: radial-gradient(circle, #999 1px, transparent 1px) 0 3px / 4px 5px repeat-x;
}
.vgroup:last-child .hgrip {
  height: 8px;
  margin-top: 0;
}
.vb {
  height: 35px;
}
.vb svg {
  width: 26px;
  height: 26px;
}
.vb.lit svg {
  opacity: 1;
}
.left {
  align-self: flex-start;
  width: 20px;
  height: 12px;
  display: flex;
  align-items: center;
  justify-content: center;
}
.left::after {
  content: "";
  border: 4px solid transparent;
  border-right-color: #111;
  border-left: 0;
}
.hsep {
  width: 32px;
  height: 2px;
  border-top: 1px solid #aaa;
  background: #fff;
}

/* navigator */
.navigator {
  flex: 0 0 299px;
  padding: 0 7px 2px 11px;
  display: flex;
  flex-direction: column;
  border-left: 1px solid #fff;
  border-right: 2px solid #fafafa;
  background: #eee;
}
.navigator h2 {
  height: 35px;
  margin: 0;
  padding: 2px 0 0 4px;
  display: flex;
  align-items: center;
  gap: 13px;
  font-size: 15px;
  border-top: 1px solid #999;
}
.pin {
  width: 15px;
  height: 13px;
  border: 1px solid #111;
  border-top-width: 3px;
}
.list {
  flex: 1;
  display: flex;
  flex-direction: column;
  border: 1px solid #777;
  background: #fff;
}
.list-head {
  height: 20px;
  padding-left: 7px;
  font-size: 13px;
  line-height: 19px;
  border-bottom: 1px solid #999;
  background: linear-gradient(#fbfbfb 50%, #e2e2e4);
}
.tree {
  flex: 1;
  margin: 0;
  padding: 0;
  list-style: none;
  display: grid;
  grid-template-rows: repeat(31, 2fr) 1fr;
  font-size: 13px;
}
.tree li {
  min-height: 0;
  display: flex;
  align-items: center;
  border-bottom: 1px solid #e4e4e4;
  line-height: 18px;
}
.tree li:nth-child(even) {
  background: #f6f6f6;
}
.tree svg {
  width: 16px;
  height: 16px;
  margin-right: 4px;
}
.tree .st {
  margin: 0 1px 0 2px;
}
.cell.first + svg {
  margin-left: 2px;
}
.picked {
  color: #6440c4;
}
.code {
  font: 11px/18px "DejaVu Sans Mono", monospace;
}
.root {
  padding-left: 4px;
}
.cell {
  position: relative;
  align-self: stretch;
  width: 21px;
  display: flex;
  align-items: center;
  justify-content: center;
}
.cell::before {
  content: "";
  position: absolute;
  left: 10px;
  top: 0;
  bottom: 0;
  border-left: 1px dotted #999;
}
.cell::after {
  content: "";
  position: absolute;
  left: 10px;
  right: 0;
  top: 50%;
  border-top: 1px dotted #999;
}
.cell.first::before {
  top: 50%;
}
.cell.last::before {
  bottom: 50%;
}
.cell.none::before,
.cell.none::after,
.cell.pass::after {
  display: none;
}
.exp {
  position: relative;
  z-index: 1;
  width: 11px;
  height: 11px;
  border: 1px solid #888;
  border-radius: 2px;
  background: #fff;
  font: 10px/8px "DejaVu Sans", sans-serif;
}
.scroll {
  height: 18px;
  padding: 0 5px;
  display: flex;
  align-items: stretch;
  background: #f0f0f0;
}
.scroll svg {
  width: 10px;
  height: 10px;
}
.thumb {
  width: 57px;
  margin-left: 5px;
  background: #cdcdcd;
}
.splitter {
  height: 19px;
  padding-top: 4px;
  border-bottom: 1px solid #888;
  display: flex;
  gap: 5px;
}
.splitter::before,
.splitter::after {
  content: "";
  flex: 1;
  height: 4px;
  border-bottom: 1px solid #aaa;
}
.splitter span {
  width: 51px;
  height: 7px;
  border: 1px solid #999;
  border-top-color: #fff;
  background: #ddd;
}

/* resource tabs */
.tabs {
  flex: 0 0 34px;
  display: flex;
  flex-direction: column;
  align-items: flex-start;
  gap: 2px;
  background: linear-gradient(90deg, #888, #a8a8a8 4px, #b2b2b2);
}
.gear {
  height: 50px;
  padding: 10px 0 26px 11px;
}
.gear svg {
  width: 15px;
  height: 15px;
}
.tab {
  width: 30px;
  height: 45px;
  border: 1px solid #666;
  border-left: 0;
  border-radius: 0 4px 4px 0;
  background: linear-gradient(#e6e6e6, #d2d2d2);
}
.tab svg {
  width: 27px;
  height: 27px;
}
.tab.active {
  width: 32px;
  height: 47px;
  background: #eee;
}
.tab.apart {
  margin-top: 13px;
}
.tab.stub {
  height: 20px;
}
.tab.stub svg {
  width: 30px;
  height: 20px;
}
.steps {
  margin: 2px 0 0 7px;
  display: flex;
  flex-direction: column;
  gap: 1px;
}
.steps button {
  width: 18px;
  height: 17px;
  border: 1px solid #fff;
  border-right-color: #666;
  border-bottom-color: #666;
  background: #eaeaea;
}

/* bottom */
.row.bottom {
  height: 39px;
  background: linear-gradient(#ebebeb, #cdcdcd);
}
.status {
  height: 23px;
  margin-bottom: 5px;
  display: flex;
  align-items: stretch;
  border-top: 1px solid #fafafa;
  background: #d8d8d8;
  box-shadow: 0 1px #000, 0 4px #666;
}
.status span {
  border-right: 1px solid #b0b0b0;
  box-shadow: 1px 0 #f4f4f4;
}
.status .cue { width: 715px; }
.status .message { flex: 1; }
.status .slot { width: 22px; }
.status .tail { width: 20px; border: 0; }
.status button {
  width: 32px;
  display: flex;
  align-items: center;
  justify-content: center;
}
.status svg {
  width: 18px;
  height: 18px;
}
```
